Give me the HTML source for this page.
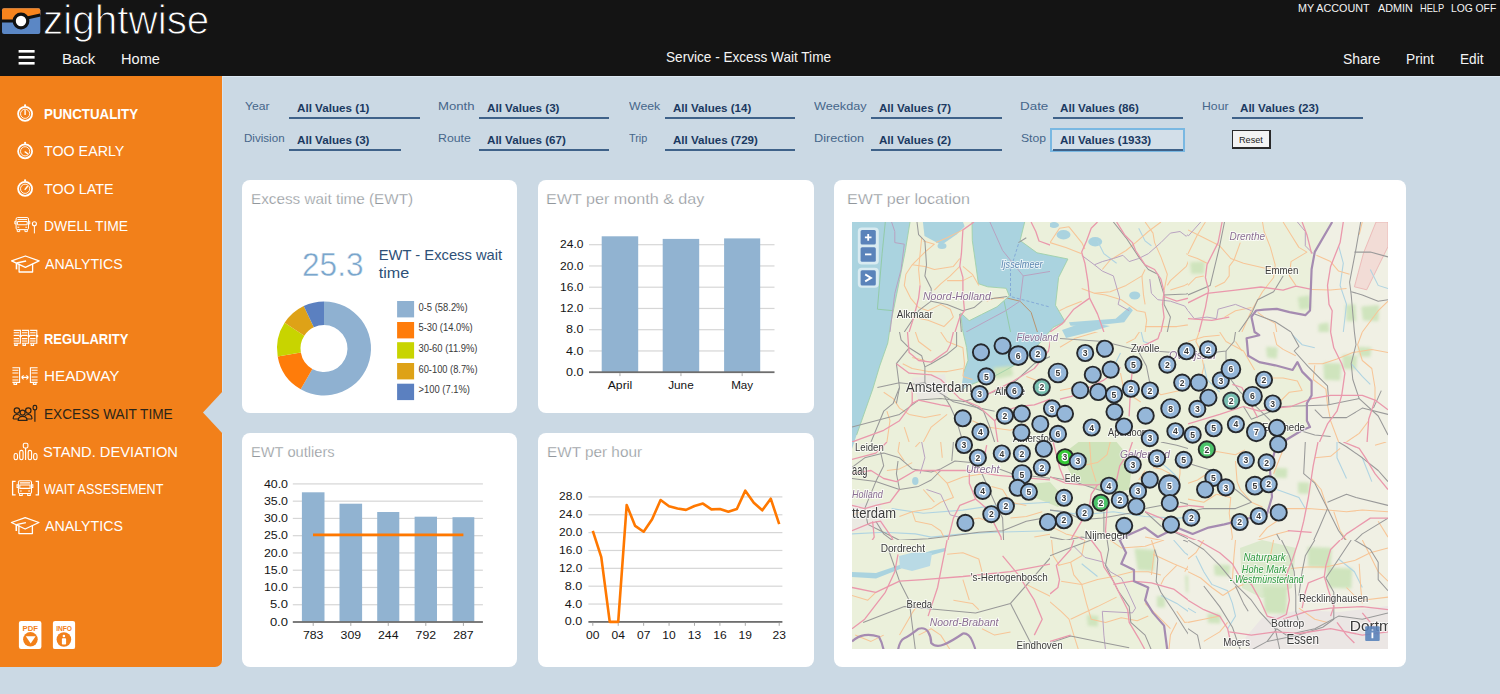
<!DOCTYPE html>
<html><head><meta charset="utf-8">
<style>
*{margin:0;padding:0;box-sizing:border-box}
html,body{width:1500px;height:694px;overflow:hidden;background:#cbd9e4;font-family:"Liberation Sans",sans-serif}
.a{position:absolute;white-space:nowrap;line-height:1}
#hdr{position:absolute;left:0;top:0;width:1500px;height:76px;background:#141414}
.hw{color:#f4f4f4}
#side{position:absolute;left:0;top:76px;width:222px;height:591px;background:#f2801a;border-bottom-right-radius:7px}
.si{color:#fff}
.fl{color:#46668a}
.fv{color:#1b3961;font-weight:bold}
.ul{position:absolute;height:2px;background:#3f6289}
.card{position:absolute;background:#fff;border-radius:8px}
.ct{color:#92979c;-webkit-text-stroke:0.25px #fff}
</style></head><body>
<div id="hdr"></div>
<div class="a" style="left:222px;top:76px;width:1278px;height:1.2px;background:#dce8f2"></div>
<div class="a" style="left:222px;top:76px;width:1.3px;height:585px;background:#d6e4ef"></div>
<svg class="a" style="left:0;top:0" width="44" height="40" viewBox="0 0 44 40">
<rect x="2" y="8.3" width="38.3" height="25.7" rx="2" fill="#5b87c5"/>
<path d="M4 8.3 H38.3 Q40.3 8.3 40.3 10.3 V15 L28.8 17 L21 21 L2 21 V10.3 Q2 8.3 4 8.3Z" fill="#f7841e"/>
<path d="M2 21 H14 M27 18 L40.3 15" stroke="#111" stroke-width="3.2" fill="none"/>
<circle cx="21" cy="21" r="6.8" fill="#fff" stroke="#111" stroke-width="3.2"/>
</svg>
<div class="a hw" id="logo" style="left:43.38px;top:0.00px;font-size:40px;color:#fff;-webkit-text-stroke:1px #141414;transform:scaleX(1.0112);transform-origin:0 0;">zightwise</div>
<svg class="a" style="left:18px;top:50px" width="17" height="15"><rect x="0.6" y="0" width="16" height="2.6" fill="#fff"/><rect x="0.6" y="6" width="16" height="2.6" fill="#fff"/><rect x="0.6" y="12" width="16" height="2.6" fill="#fff"/></svg>
<div class="a hw" style="left:61.76px;top:51.67px;font-size:14.5px;transform:scaleX(1.0323);transform-origin:0 0;">Back</div>
<div class="a hw" style="left:120.79px;top:51.67px;font-size:14.5px;transform:scaleX(1.0054);transform-origin:0 0;">Home</div>
<div class="a hw" style="left:666.34px;top:49.67px;font-size:14.5px;transform:scaleX(0.9381);transform-origin:0 0;">Service - Excess Wait Time</div>
<div class="a hw" style="left:1343.30px;top:51.50px;font-size:14px;transform:scaleX(0.9972);transform-origin:0 0;">Share</div>
<div class="a hw" style="left:1405.92px;top:51.50px;font-size:14px;transform:scaleX(0.9783);transform-origin:0 0;">Print</div>
<div class="a hw" style="left:1459.63px;top:51.50px;font-size:14px;transform:scaleX(0.9738);transform-origin:0 0;">Edit</div>
<div class="a hw" style="left:1298.12px;top:2.65px;font-size:11px;transform:scaleX(0.9792);transform-origin:0 0;">MY ACCOUNT</div>
<div class="a hw" style="left:1378.00px;top:2.65px;font-size:11px;transform:scaleX(0.9827);transform-origin:0 0;">ADMIN</div>
<div class="a hw" style="left:1419.74px;top:2.65px;font-size:11px;transform:scaleX(0.8425);transform-origin:0 0;">HELP</div>
<div class="a hw" style="left:1451.16px;top:2.65px;font-size:11px;transform:scaleX(0.9362);transform-origin:0 0;">LOG OFF</div>
<div id="side"></div>
<svg class="a" style="left:200px;top:388px" width="24" height="48"><path d="M23 3 L3 24.5 L23 46Z" fill="#cbd9e4"/></svg>
<div class="a si" style="left:43.81px;top:106.05px;font-size:15px;font-weight:bold;transform:scaleX(0.8890);transform-origin:0 0;">PUNCTUALITY</div>
<div class="a si" style="left:44.41px;top:143.45px;font-size:15px;transform:scaleX(0.9511);transform-origin:0 0;">TOO EARLY</div>
<div class="a si" style="left:44.41px;top:180.85px;font-size:15px;transform:scaleX(0.9555);transform-origin:0 0;">TOO LATE</div>
<div class="a si" style="left:43.89px;top:217.55px;font-size:15px;transform:scaleX(0.9258);transform-origin:0 0;">DWELL TIME</div>
<div class="a si" style="left:45.00px;top:256.05px;font-size:15px;transform:scaleX(0.9448);transform-origin:0 0;">ANALYTICS</div>
<div class="a si" style="left:44.34px;top:330.85px;font-size:15px;font-weight:bold;transform:scaleX(0.8649);transform-origin:0 0;">REGULARITY</div>
<div class="a si" style="left:43.78px;top:368.05px;font-size:15px;transform:scaleX(1.0165);transform-origin:0 0;">HEADWAY</div>
<div class="a si" style="left:43.91px;top:405.85px;font-size:15px;color:#2b2418;transform:scaleX(0.9097);transform-origin:0 0;">EXCESS WAIT TIME</div>
<div class="a si" style="left:42.91px;top:443.55px;font-size:15px;transform:scaleX(0.9794);transform-origin:0 0;">STAND. DEVIATION</div>
<div class="a si" style="left:43.92px;top:480.55px;font-size:15px;transform:scaleX(0.8374);transform-origin:0 0;">WAIT ASSESEMENT</div>
<div class="a si" style="left:44.70px;top:518.05px;font-size:15px;transform:scaleX(0.9485);transform-origin:0 0;">ANALYTICS</div>
<svg class="a" style="left:0;top:0" width="222" height="694">
<circle cx="25.1" cy="113.8" r="7.0" fill="none" stroke="#fff" stroke-width="1.8"/>
<circle cx="25.1" cy="113.8" r="4.6" fill="none" stroke="#fff" stroke-width="0.9"/>
<circle cx="25.1" cy="105.39999999999999" r="1.1" fill="#fff"/>
<path d="M25.1 114.39999999999999 L25.10 110.60" stroke="#fff" stroke-width="1.4" stroke-linecap="round"/>
<circle cx="25.1" cy="151.3" r="7.0" fill="none" stroke="#fff" stroke-width="1.8"/>
<circle cx="25.1" cy="151.3" r="4.6" fill="none" stroke="#fff" stroke-width="0.9"/>
<circle cx="25.1" cy="142.9" r="1.1" fill="#fff"/>
<path d="M25.1 151.9 L27.36 153.56" stroke="#fff" stroke-width="1.4" stroke-linecap="round"/>
<circle cx="25.1" cy="188.8" r="7.0" fill="none" stroke="#fff" stroke-width="1.8"/>
<circle cx="25.1" cy="188.8" r="4.6" fill="none" stroke="#fff" stroke-width="0.9"/>
<circle cx="25.1" cy="180.4" r="1.1" fill="#fff"/>
<path d="M25.1 189.4 L27.36 186.54" stroke="#fff" stroke-width="1.4" stroke-linecap="round"/>
<g transform="translate(14.3,217.2) scale(0.9)" fill="none" stroke="#fff" stroke-width="1.1">
<rect x="2" y="0.4" width="13.8" height="13.4" rx="1.6"/>
<path d="M3.5 2.6 H14.3 M3.5 4.8 H14.3 V8.4 H3.5Z M3.5 11.2 H5.5 M12.3 11.2 H14.3"/>
<path d="M2 4.5 H0.6 V7.5 H2 M15.8 4.5 H17.2 V7.5 H15.8"/>
<path d="M3.3 13.8 V16 H6 V13.8 M11.8 13.8 V16 H14.5 V13.8"/>
</g>
<circle cx="34.4" cy="223.7" r="2" fill="none" stroke="#fff" stroke-width="1.1"/><path d="M34.4 225.7 V233.4" stroke="#fff" stroke-width="1"/>
<g transform="translate(11.6,256)" fill="none" stroke="#fff" stroke-width="1.3" stroke-linejoin="round">
<path d="M0 4.9 L13.8 0 L27.5 4.9 L13.8 11.4Z"/>
<path d="M7.5 7.7 V16 H21 V7.7"/>
<path d="M4.9 7 V13.4" stroke-width="1.6"/>
<path d="M4.9 7 L14.5 5"/>
</g>
<g transform="translate(13.2,329.8)" fill="none" stroke="#fff" stroke-width="1.1">
<path d="M0.5 0.6 H7.2 V13.4 H0.5 M0.5 3 H6 M0.5 5.6 H6 M0.5 8.8 H6 M0.5 11.2 H6"/>
<path d="M1.6 13.4 V15.6 H4 V13.4"/><circle cx="7.4" cy="6.2" r="0.8" fill="#fff"/>
</g>
<g transform="translate(21.4,329.8)" fill="none" stroke="#fff" stroke-width="1.1">
<path d="M0.5 0.6 H7.2 V13.4 H0.5 M0.5 3 H6 M0.5 5.6 H6 M0.5 8.8 H6 M0.5 11.2 H6"/>
<path d="M1.6 13.4 V15.6 H4 V13.4"/><circle cx="7.4" cy="6.2" r="0.8" fill="#fff"/>
</g>
<g transform="translate(29.6,329.8)" fill="none" stroke="#fff" stroke-width="1.1">
<path d="M0.5 0.6 H7.2 V13.4 H0.5 M0.5 3 H6 M0.5 5.6 H6 M0.5 8.8 H6 M0.5 11.2 H6"/>
<path d="M1.6 13.4 V15.6 H4 V13.4"/><circle cx="7.4" cy="6.2" r="0.8" fill="#fff"/>
</g>
<g fill="none" stroke="#fff" stroke-width="1.1">
<path d="M12.4 367.8 H19.6 V382.4 H12.4 M12.4 370.2 H18.4 M12.4 373 H18.4 M12.4 377 H18.4 M12.4 380 H18.4 M14 382.4 V384.4 H16.6 V382.4"/>
<path d="M37.6 367.8 H30.4 V382.4 H37.6 M37.6 370.2 H31.6 M37.6 373 H31.6 M37.6 377 H31.6 M37.6 380 H31.6 M36 382.4 V384.4 H33.4 V382.4"/>
<path d="M21.5 377.4 L23.6 375.4 M21.5 377.4 L23.6 379.4 M28.5 377.4 L26.4 375.4 M28.5 377.4 L26.4 379.4 M21.7 377.4 H28.3"/>
</g>
<g fill="none" stroke="#2a2219" stroke-width="1.2">
<circle cx="16.9" cy="410.6" r="2.7"/><circle cx="28.3" cy="410.6" r="2.7"/><circle cx="22.6" cy="412.6" r="2.5"/>
<path d="M13.2 419 Q13.2 414.5 17 414.5 Q19.5 414.5 20.3 416 M32 419 Q32 414.5 28.2 414.5 Q25.8 414.5 25 416 M13.2 419 H19 M26.2 419 H32"/>
<path d="M18.2 420.4 Q18.2 416.4 22.6 416.4 Q27 416.4 27 420.4 Z"/>
<rect x="33.1" y="405.4" width="3.6" height="4.4" rx="1.6"/><path d="M34.9 409.8 V421.8"/>
</g>
<g fill="none" stroke="#fff" stroke-width="1.1">
<rect x="14.1" y="453.5" width="3.4" height="6.2" rx="1.7"/><rect x="19.7" y="450.4" width="3.4" height="9.3" rx="1.7"/>
<rect x="28.2" y="450.4" width="3.4" height="9.3" rx="1.7"/><rect x="33.6" y="453.5" width="3.4" height="6.2" rx="1.7"/>
<rect x="23.3" y="443.2" width="4.6" height="4.8" rx="1.4"/><path d="M25.6 448 V460"/>
</g>
<g transform="translate(16.5,480.4) scale(0.95)" fill="none" stroke="#fff" stroke-width="1.1">
<rect x="2" y="0.4" width="13.8" height="13.4" rx="1.6"/>
<path d="M3.5 2.6 H14.3 M3.5 4.8 H14.3 V8.4 H3.5Z M3.5 11.2 H5.5 M12.3 11.2 H14.3"/>
<path d="M2 4.5 H0.6 V7.5 H2 M15.8 4.5 H17.2 V7.5 H15.8"/>
<path d="M3.3 13.8 V16 H6 V13.8 M11.8 13.8 V16 H14.5 V13.8"/>
</g>
<g fill="none" stroke="#fff" stroke-width="1.3"><path d="M15.6 481.4 H12.6 V494.8 H15.6 M35.6 481.4 H38.4 V494.8 H35.6"/></g>
<g transform="translate(11.4,517.6)" fill="none" stroke="#fff" stroke-width="1.3" stroke-linejoin="round">
<path d="M0 4.9 L13.8 0 L27.5 4.9 L13.8 11.4Z"/>
<path d="M7.5 7.7 V16 H21 V7.7"/>
<path d="M4.9 7 V13.4" stroke-width="1.6"/>
<path d="M4.9 7 L14.5 5"/>
</g>
</svg>
<svg class="a" style="left:0;top:600px" width="100" height="60">
<rect x="18.9" y="20.9" width="22.5" height="28" rx="2.2" fill="#fff"/>
<text x="30.2" y="30.6" font-family="Liberation Sans" font-weight="bold" font-size="6.6" fill="#f2801a" text-anchor="middle" textLength="15.4" lengthAdjust="spacingAndGlyphs">PDF</text>
<circle cx="30.4" cy="39.3" r="7.3" fill="#f2801a"/><path d="M25.8 36.3 H35.6 L30.7 43.4Z" fill="#fff"/>
<rect x="52.9" y="20.9" width="22.2" height="28.2" rx="2.2" fill="#fff"/>
<text x="64.1" y="30.6" font-family="Liberation Sans" font-weight="bold" font-size="6.6" fill="#f2801a" text-anchor="middle" textLength="15.8" lengthAdjust="spacingAndGlyphs">INFO</text>
<circle cx="63.9" cy="39.5" r="7.3" fill="#f2801a"/><circle cx="63.9" cy="36" r="1.3" fill="#fff"/><rect x="61.9" y="38.2" width="4.2" height="6.4" rx="0.8" fill="#fff"/>
</svg>
<div class="a fl" style="left:244.68px;top:101.42px;font-size:11.5px;transform:scaleX(1.0573);transform-origin:0 0;">Year</div>
<div class="a fv" style="left:296.70px;top:103.02px;font-size:11.5px;font-weight:bold;transform:scaleX(1.0127);transform-origin:0 0;">All Values (1)</div>
<div class="ul" style="left:289px;top:117px;width:131px"></div>
<div class="a fl" style="left:244.09px;top:133.42px;font-size:11.5px;transform:scaleX(1.0078);transform-origin:0 0;">Division</div>
<div class="a fv" style="left:296.70px;top:135.03px;font-size:11.5px;font-weight:bold;transform:scaleX(1.0127);transform-origin:0 0;">All Values (3)</div>
<div class="ul" style="left:289px;top:149px;width:112px"></div>
<div class="a fl" style="left:438.27px;top:101.42px;font-size:11.5px;transform:scaleX(1.1414);transform-origin:0 0;">Month</div>
<div class="a fv" style="left:486.70px;top:103.02px;font-size:11.5px;font-weight:bold;transform:scaleX(1.0127);transform-origin:0 0;">All Values (3)</div>
<div class="ul" style="left:479px;top:117px;width:130.29999999999995px"></div>
<div class="a fl" style="left:438.34px;top:133.42px;font-size:11.5px;transform:scaleX(1.0717);transform-origin:0 0;">Route</div>
<div class="a fv" style="left:486.70px;top:135.03px;font-size:11.5px;font-weight:bold;transform:scaleX(1.0104);transform-origin:0 0;">All Values (67)</div>
<div class="ul" style="left:479px;top:149px;width:130.29999999999995px"></div>
<div class="a fl" style="left:628.89px;top:101.42px;font-size:11.5px;transform:scaleX(1.0690);transform-origin:0 0;">Week</div>
<div class="a fv" style="left:672.70px;top:103.02px;font-size:11.5px;font-weight:bold;transform:scaleX(1.0039);transform-origin:0 0;">All Values (14)</div>
<div class="ul" style="left:664.7px;top:117px;width:130.29999999999995px"></div>
<div class="a fl" style="left:628.81px;top:133.42px;font-size:11.5px;transform:scaleX(0.9465);transform-origin:0 0;">Trip</div>
<div class="a fv" style="left:672.70px;top:135.03px;font-size:11.5px;font-weight:bold;transform:scaleX(1.0060);transform-origin:0 0;">All Values (729)</div>
<div class="ul" style="left:664.7px;top:149px;width:130.29999999999995px"></div>
<div class="a fl" style="left:814.49px;top:101.42px;font-size:11.5px;transform:scaleX(1.1008);transform-origin:0 0;">Weekday</div>
<div class="a fv" style="left:879.40px;top:103.02px;font-size:11.5px;font-weight:bold;transform:scaleX(1.0071);transform-origin:0 0;">All Values (7)</div>
<div class="ul" style="left:871.3px;top:117px;width:130.4000000000001px"></div>
<div class="a fl" style="left:813.61px;top:133.42px;font-size:11.5px;transform:scaleX(1.1050);transform-origin:0 0;">Direction</div>
<div class="a fv" style="left:879.40px;top:135.03px;font-size:11.5px;font-weight:bold;transform:scaleX(1.0071);transform-origin:0 0;">All Values (2)</div>
<div class="ul" style="left:871.3px;top:149px;width:130.4000000000001px"></div>
<div class="a fl" style="left:1020.25px;top:101.42px;font-size:11.5px;transform:scaleX(1.1659);transform-origin:0 0;">Date</div>
<div class="a fv" style="left:1060.40px;top:103.02px;font-size:11.5px;font-weight:bold;transform:scaleX(1.0117);transform-origin:0 0;">All Values (86)</div>
<div class="ul" style="left:1052.7px;top:117px;width:130.29999999999995px"></div>
<div class="a" style="left:1050px;top:128px;width:135px;height:24px;border:2px solid #79b8e2;background:#d3dfe9"></div>
<div class="a fl" style="left:1020.77px;top:133.42px;font-size:11.5px;transform:scaleX(1.0573);transform-origin:0 0;">Stop</div>
<div class="a fv" style="left:1060.40px;top:135.03px;font-size:11.5px;font-weight:bold;transform:scaleX(1.0044);transform-origin:0 0;">All Values (1933)</div>
<div class="ul" style="left:1052.7px;top:149px;width:130.29999999999995px"></div>
<div class="a fl" style="left:1201.74px;top:101.42px;font-size:11.5px;transform:scaleX(1.0630);transform-origin:0 0;">Hour</div>
<div class="a fv" style="left:1240.10px;top:103.02px;font-size:11.5px;font-weight:bold;transform:scaleX(1.0104);transform-origin:0 0;">All Values (23)</div>
<div class="ul" style="left:1232px;top:117px;width:131px"></div>
<div class="a" style="left:1232px;top:130px;width:38.5px;height:18.5px;border:1.5px solid #2a2a2a;background:#f3f3f3;border-right-width:2.6px;border-bottom-width:2.6px"></div>
<div class="a " style="left:1238.83px;top:135.23px;font-size:9.5px;color:#222;transform:scaleX(0.9625);transform-origin:0 0;">Reset</div>
<div class="card" style="left:242px;top:180px;width:275px;height:233px"></div>
<div class="card" style="left:538px;top:180px;width:276px;height:233px"></div>
<div class="card" style="left:242px;top:433px;width:275px;height:234px"></div>
<div class="card" style="left:538px;top:433px;width:276px;height:234px"></div>
<div class="card" style="left:834px;top:180px;width:571.5px;height:487px"></div>
<div class="a ct" style="left:250.58px;top:190.75px;font-size:15px;transform:scaleX(1.0185);transform-origin:0 0;">Excess wait time (EWT)</div>
<div class="a ct" style="left:546.21px;top:190.75px;font-size:15px;transform:scaleX(1.0753);transform-origin:0 0;">EWT per month &amp; day</div>
<div class="a ct" style="left:250.83px;top:444.25px;font-size:15px;transform:scaleX(0.9774);transform-origin:0 0;">EWT outliers</div>
<div class="a ct" style="left:546.78px;top:444.25px;font-size:15px;transform:scaleX(1.0207);transform-origin:0 0;">EWT per hour</div>
<div class="a ct" style="left:847.11px;top:191.25px;font-size:15px;transform:scaleX(1.0710);transform-origin:0 0;">EWT per location</div>
<svg class="a" style="left:0;top:0" width="834" height="694">
<path d="M324.00 301.50 A47 47 0 1 1 300.69 389.31 L312.35 368.91 A23.5 23.5 0 1 0 324.00 325.00Z" fill="#8fb1d1"/>
<path d="M300.69 389.31 A47 47 0 0 1 277.69 356.52 L300.84 352.51 A23.5 23.5 0 0 0 312.35 368.91Z" fill="#ff7c0a"/>
<path d="M277.69 356.52 A47 47 0 0 1 284.61 322.86 L304.31 335.68 A23.5 23.5 0 0 0 300.84 352.51Z" fill="#c8d400"/>
<path d="M284.61 322.86 A47 47 0 0 1 303.70 306.11 L313.85 327.30 A23.5 23.5 0 0 0 304.31 335.68Z" fill="#dea217"/>
<path d="M303.70 306.11 A47 47 0 0 1 324.00 301.50 L324.00 325.00 A23.5 23.5 0 0 0 313.85 327.30Z" fill="#5b80c0"/>
<rect x="397.1" y="301" width="17" height="16.4" fill="#8fb1d1"/>
<text x="418.50" y="310.80" font-family="Liberation Sans" font-size="10" fill="#3a3a3a" text-anchor="start" textLength="49.10000000000002" lengthAdjust="spacingAndGlyphs" >0-5 (58.2%)</text>
<rect x="397.1" y="322" width="17" height="16.4" fill="#ff7c0a"/>
<text x="418.50" y="331.40" font-family="Liberation Sans" font-size="10" fill="#3a3a3a" text-anchor="start" textLength="54.19999999999999" lengthAdjust="spacingAndGlyphs" >5-30 (14.0%)</text>
<rect x="397.1" y="342.2" width="17" height="16.4" fill="#c8d400"/>
<text x="418.50" y="352.00" font-family="Liberation Sans" font-size="10" fill="#3a3a3a" text-anchor="start" textLength="59.0" lengthAdjust="spacingAndGlyphs" >30-60 (11.9%)</text>
<rect x="397.1" y="363" width="17" height="16.4" fill="#dea217"/>
<text x="418.50" y="372.60" font-family="Liberation Sans" font-size="10" fill="#3a3a3a" text-anchor="start" textLength="59.0" lengthAdjust="spacingAndGlyphs" >60-100 (8.7%)</text>
<rect x="397.1" y="383.7" width="17" height="16.4" fill="#5b80c0"/>
<text x="418.50" y="392.90" font-family="Liberation Sans" font-size="10" fill="#3a3a3a" text-anchor="start" textLength="51.5" lengthAdjust="spacingAndGlyphs" >&gt;100 (7.1%)</text>
<text x="302.00" y="276.00" font-family="Liberation Sans" font-size="34" fill="#7aa6cc" text-anchor="start" textLength="61.5" lengthAdjust="spacingAndGlyphs" stroke="#fff" stroke-width="0.5">25.3</text>
<text x="378.70" y="259.60" font-family="Liberation Sans" font-size="15" fill="#2e5077" text-anchor="start" textLength="123.5" lengthAdjust="spacingAndGlyphs" >EWT - Excess wait</text>
<text x="378.70" y="278.30" font-family="Liberation Sans" font-size="15" fill="#2e5077" text-anchor="start" textLength="30.5" lengthAdjust="spacingAndGlyphs" >time</text>
<rect x="589" y="350.35" width="185.5" height="1.2" fill="#d6d6d6"/>
<rect x="589" y="329.10" width="185.5" height="1.2" fill="#d6d6d6"/>
<rect x="589" y="307.85" width="185.5" height="1.2" fill="#d6d6d6"/>
<rect x="589" y="286.60" width="185.5" height="1.2" fill="#d6d6d6"/>
<rect x="589" y="265.35" width="185.5" height="1.2" fill="#d6d6d6"/>
<rect x="589" y="244.10" width="185.5" height="1.2" fill="#d6d6d6"/>
<text x="583.50" y="375.90" font-family="Liberation Sans" font-size="10.2" fill="#141414" text-anchor="end" textLength="17.5" lengthAdjust="spacingAndGlyphs" >0.0</text>
<text x="583.50" y="354.65" font-family="Liberation Sans" font-size="10.2" fill="#141414" text-anchor="end" textLength="17.5" lengthAdjust="spacingAndGlyphs" >4.0</text>
<text x="583.50" y="333.40" font-family="Liberation Sans" font-size="10.2" fill="#141414" text-anchor="end" textLength="17.5" lengthAdjust="spacingAndGlyphs" >8.0</text>
<text x="583.50" y="312.15" font-family="Liberation Sans" font-size="10.2" fill="#141414" text-anchor="end" textLength="23.4" lengthAdjust="spacingAndGlyphs" >12.0</text>
<text x="583.50" y="290.90" font-family="Liberation Sans" font-size="10.2" fill="#141414" text-anchor="end" textLength="23.4" lengthAdjust="spacingAndGlyphs" >16.0</text>
<text x="583.50" y="269.65" font-family="Liberation Sans" font-size="10.2" fill="#141414" text-anchor="end" textLength="23.4" lengthAdjust="spacingAndGlyphs" >20.0</text>
<text x="583.50" y="248.40" font-family="Liberation Sans" font-size="10.2" fill="#141414" text-anchor="end" textLength="23.4" lengthAdjust="spacingAndGlyphs" >24.0</text>
<rect x="601.7" y="236.3" width="36.5" height="135.89999999999998" fill="#91b3d1"/>
<rect x="662.7" y="238.9" width="36.5" height="133.29999999999998" fill="#91b3d1"/>
<rect x="724.1" y="238.4" width="36.10000000000002" height="133.79999999999998" fill="#91b3d1"/>
<rect x="589" y="371.3" width="185.5" height="1.8" fill="#6e6e6e"/>
<rect x="619.45" y="373.09999999999997" width="1" height="3" fill="#aaa"/>
<text x="619.95" y="388.60" font-family="Liberation Sans" font-size="10.2" fill="#141414" text-anchor="middle" textLength="24.5" lengthAdjust="spacingAndGlyphs" >April</text>
<rect x="680.45" y="373.09999999999997" width="1" height="3" fill="#aaa"/>
<text x="680.95" y="388.60" font-family="Liberation Sans" font-size="10.2" fill="#141414" text-anchor="middle" textLength="25.5" lengthAdjust="spacingAndGlyphs" >June</text>
<rect x="741.6500000000001" y="373.09999999999997" width="1" height="3" fill="#aaa"/>
<text x="742.15" y="388.60" font-family="Liberation Sans" font-size="10.2" fill="#141414" text-anchor="middle" textLength="22" lengthAdjust="spacingAndGlyphs" >May</text>
<rect x="292.8" y="604.14" width="190.09999999999997" height="1.2" fill="#d6d6d6"/>
<rect x="292.8" y="586.88" width="190.09999999999997" height="1.2" fill="#d6d6d6"/>
<rect x="292.8" y="569.61" width="190.09999999999997" height="1.2" fill="#d6d6d6"/>
<rect x="292.8" y="552.35" width="190.09999999999997" height="1.2" fill="#d6d6d6"/>
<rect x="292.8" y="535.09" width="190.09999999999997" height="1.2" fill="#d6d6d6"/>
<rect x="292.8" y="517.82" width="190.09999999999997" height="1.2" fill="#d6d6d6"/>
<rect x="292.8" y="500.56" width="190.09999999999997" height="1.2" fill="#d6d6d6"/>
<rect x="292.8" y="483.30" width="190.09999999999997" height="1.2" fill="#d6d6d6"/>
<text x="288.00" y="625.70" font-family="Liberation Sans" font-size="10.2" fill="#141414" text-anchor="end" textLength="18.1" lengthAdjust="spacingAndGlyphs" >0.0</text>
<text x="288.00" y="608.44" font-family="Liberation Sans" font-size="10.2" fill="#141414" text-anchor="end" textLength="18.1" lengthAdjust="spacingAndGlyphs" >5.0</text>
<text x="288.00" y="591.18" font-family="Liberation Sans" font-size="10.2" fill="#141414" text-anchor="end" textLength="24.1" lengthAdjust="spacingAndGlyphs" >10.0</text>
<text x="288.00" y="573.91" font-family="Liberation Sans" font-size="10.2" fill="#141414" text-anchor="end" textLength="24.1" lengthAdjust="spacingAndGlyphs" >15.0</text>
<text x="288.00" y="556.65" font-family="Liberation Sans" font-size="10.2" fill="#141414" text-anchor="end" textLength="24.1" lengthAdjust="spacingAndGlyphs" >20.0</text>
<text x="288.00" y="539.39" font-family="Liberation Sans" font-size="10.2" fill="#141414" text-anchor="end" textLength="24.1" lengthAdjust="spacingAndGlyphs" >25.0</text>
<text x="288.00" y="522.12" font-family="Liberation Sans" font-size="10.2" fill="#141414" text-anchor="end" textLength="24.1" lengthAdjust="spacingAndGlyphs" >30.0</text>
<text x="288.00" y="504.86" font-family="Liberation Sans" font-size="10.2" fill="#141414" text-anchor="end" textLength="24.1" lengthAdjust="spacingAndGlyphs" >35.0</text>
<text x="288.00" y="487.60" font-family="Liberation Sans" font-size="10.2" fill="#141414" text-anchor="end" textLength="24.1" lengthAdjust="spacingAndGlyphs" >40.0</text>
<rect x="301.9" y="492.3" width="22.600000000000023" height="129.7" fill="#91b3d1"/>
<rect x="339.5" y="503.7" width="22.600000000000023" height="118.30000000000001" fill="#91b3d1"/>
<rect x="377.2" y="512" width="22.100000000000023" height="110" fill="#91b3d1"/>
<rect x="414.6" y="516.7" width="22.399999999999977" height="105.29999999999995" fill="#91b3d1"/>
<rect x="452.5" y="517.2" width="21.80000000000001" height="104.79999999999995" fill="#91b3d1"/>
<rect x="292.8" y="621.1" width="190.09999999999997" height="1.8" fill="#6e6e6e"/>
<path d="M313 534.9 H463.4" stroke="#ff7800" stroke-width="2.6"/>
<rect x="312.7" y="622.9" width="1" height="3" fill="#aaa"/>
<text x="313.20" y="638.70" font-family="Liberation Sans" font-size="10.2" fill="#141414" text-anchor="middle" textLength="20.5" lengthAdjust="spacingAndGlyphs" >783</text>
<rect x="350.3" y="622.9" width="1" height="3" fill="#aaa"/>
<text x="350.80" y="638.70" font-family="Liberation Sans" font-size="10.2" fill="#141414" text-anchor="middle" textLength="20.5" lengthAdjust="spacingAndGlyphs" >309</text>
<rect x="387.75" y="622.9" width="1" height="3" fill="#aaa"/>
<text x="388.25" y="638.70" font-family="Liberation Sans" font-size="10.2" fill="#141414" text-anchor="middle" textLength="20.5" lengthAdjust="spacingAndGlyphs" >244</text>
<rect x="425.3" y="622.9" width="1" height="3" fill="#aaa"/>
<text x="425.80" y="638.70" font-family="Liberation Sans" font-size="10.2" fill="#141414" text-anchor="middle" textLength="20.5" lengthAdjust="spacingAndGlyphs" >792</text>
<rect x="462.9" y="622.9" width="1" height="3" fill="#aaa"/>
<text x="463.40" y="638.70" font-family="Liberation Sans" font-size="10.2" fill="#141414" text-anchor="middle" textLength="20.5" lengthAdjust="spacingAndGlyphs" >287</text>
<rect x="588.4" y="603.44" width="194.0" height="1.2" fill="#d6d6d6"/>
<rect x="588.4" y="585.59" width="194.0" height="1.2" fill="#d6d6d6"/>
<rect x="588.4" y="567.73" width="194.0" height="1.2" fill="#d6d6d6"/>
<rect x="588.4" y="549.88" width="194.0" height="1.2" fill="#d6d6d6"/>
<rect x="588.4" y="532.02" width="194.0" height="1.2" fill="#d6d6d6"/>
<rect x="588.4" y="514.16" width="194.0" height="1.2" fill="#d6d6d6"/>
<rect x="588.4" y="496.31" width="194.0" height="1.2" fill="#d6d6d6"/>
<text x="582.30" y="625.40" font-family="Liberation Sans" font-size="10.2" fill="#141414" text-anchor="end" textLength="17.5" lengthAdjust="spacingAndGlyphs" >0.0</text>
<text x="582.30" y="607.54" font-family="Liberation Sans" font-size="10.2" fill="#141414" text-anchor="end" textLength="17.5" lengthAdjust="spacingAndGlyphs" >4.0</text>
<text x="582.30" y="589.69" font-family="Liberation Sans" font-size="10.2" fill="#141414" text-anchor="end" textLength="17.5" lengthAdjust="spacingAndGlyphs" >8.0</text>
<text x="582.30" y="571.83" font-family="Liberation Sans" font-size="10.2" fill="#141414" text-anchor="end" textLength="23.2" lengthAdjust="spacingAndGlyphs" >12.0</text>
<text x="582.30" y="553.98" font-family="Liberation Sans" font-size="10.2" fill="#141414" text-anchor="end" textLength="23.2" lengthAdjust="spacingAndGlyphs" >16.0</text>
<text x="582.30" y="536.12" font-family="Liberation Sans" font-size="10.2" fill="#141414" text-anchor="end" textLength="23.2" lengthAdjust="spacingAndGlyphs" >20.0</text>
<text x="582.30" y="518.26" font-family="Liberation Sans" font-size="10.2" fill="#141414" text-anchor="end" textLength="23.2" lengthAdjust="spacingAndGlyphs" >24.0</text>
<text x="582.30" y="500.41" font-family="Liberation Sans" font-size="10.2" fill="#141414" text-anchor="end" textLength="23.2" lengthAdjust="spacingAndGlyphs" >28.0</text>
<rect x="588.4" y="621.0" width="194.0" height="1.8" fill="#6e6e6e"/>
<polyline points="592.80,530.83 601.27,557.17 609.75,621.90 618.22,621.90 626.69,504.94 635.16,525.92 643.64,531.73 652.11,519.23 660.58,500.03 669.06,506.28 677.53,508.51 686.00,509.85 694.48,506.06 702.95,503.60 711.42,509.41 719.89,508.96 728.37,511.64 736.84,508.96 745.31,490.66 753.79,502.71 762.26,510.30 770.73,498.69 779.21,524.14" fill="none" stroke="#ff7800" stroke-width="2.6" stroke-linejoin="round"/>
<rect x="592.30" y="622.8" width="1" height="3" fill="#aaa"/>
<text x="592.80" y="638.60" font-family="Liberation Sans" font-size="10.2" fill="#141414" text-anchor="middle" textLength="13.4" lengthAdjust="spacingAndGlyphs" >00</text>
<rect x="617.72" y="622.8" width="1" height="3" fill="#aaa"/>
<text x="618.22" y="638.60" font-family="Liberation Sans" font-size="10.2" fill="#141414" text-anchor="middle" textLength="13.4" lengthAdjust="spacingAndGlyphs" >04</text>
<rect x="643.14" y="622.8" width="1" height="3" fill="#aaa"/>
<text x="643.64" y="638.60" font-family="Liberation Sans" font-size="10.2" fill="#141414" text-anchor="middle" textLength="13.4" lengthAdjust="spacingAndGlyphs" >07</text>
<rect x="668.56" y="622.8" width="1" height="3" fill="#aaa"/>
<text x="669.06" y="638.60" font-family="Liberation Sans" font-size="10.2" fill="#141414" text-anchor="middle" textLength="13.4" lengthAdjust="spacingAndGlyphs" >10</text>
<rect x="693.98" y="622.8" width="1" height="3" fill="#aaa"/>
<text x="694.48" y="638.60" font-family="Liberation Sans" font-size="10.2" fill="#141414" text-anchor="middle" textLength="13.4" lengthAdjust="spacingAndGlyphs" >13</text>
<rect x="719.39" y="622.8" width="1" height="3" fill="#aaa"/>
<text x="719.89" y="638.60" font-family="Liberation Sans" font-size="10.2" fill="#141414" text-anchor="middle" textLength="13.4" lengthAdjust="spacingAndGlyphs" >16</text>
<rect x="744.81" y="622.8" width="1" height="3" fill="#aaa"/>
<text x="745.31" y="638.60" font-family="Liberation Sans" font-size="10.2" fill="#141414" text-anchor="middle" textLength="13.4" lengthAdjust="spacingAndGlyphs" >19</text>
<rect x="778.71" y="622.8" width="1" height="3" fill="#aaa"/>
<text x="779.21" y="638.60" font-family="Liberation Sans" font-size="10.2" fill="#141414" text-anchor="middle" textLength="13.4" lengthAdjust="spacingAndGlyphs" >23</text>
</svg>
<svg class="a" style="left:852px;top:222px" width="536" height="427" viewBox="852 222 536 427">
<rect x="852" y="222" width="536" height="427" fill="#ebf0db"/>
<polygon points="1332.2,222.0 1314.8,251.9 1311.6,269.3 1310.0,310.5 1305.3,315.2 1289.5,312.1 1276.8,308.9 1264.1,309.7 1256.2,310.5 1251.4,316.8 1254.6,332.0 1259.3,335.2 1246.6,338.3 1248.2,355.8 1259.3,362.1 1275.2,365.3 1292.6,370.0 1297.4,362.1 1302.1,371.6 1311.6,381.1 1311.6,395.4 1306.9,403.3 1306.9,420.7 1310.0,427.1 1302.1,430.3 1276.0,446.0 1270.0,470.0 1272.0,497.0 1267.0,514.0 1250.0,518.0 1224.3,524.4 1208.5,527.6 1192.6,533.9 1176.8,527.6 1157.8,537.0 1145.1,527.6 1126.0,536.0 1119.7,540.0 1126.1,552.7 1121.3,563.8 1134.0,570.1 1134.0,581.2 1148.3,587.5 1145.1,600.2 1153.0,612.9 1164.1,625.6 1167.3,650.0 1388.0,650.0 1388.0,222.0" fill="#f0f0e4"/>
<polygon points="1078.5,442.0 1116.6,442.0 1132.4,461.0 1129.2,489.5 1116.6,492.7 1097.5,489.5 1073.8,480.0 1065.8,464.2 1068.0,450.0" fill="#cfe3ba"/>
<polygon points="1030.0,484.0 1050.0,482.0 1066.0,500.0 1058.0,507.0 1036.0,498.0" fill="#d2e5bf"/>
<polygon points="1240.0,548.0 1262.0,540.0 1296.0,548.0 1292.0,588.0 1262.0,598.0 1242.0,588.0" fill="#dbe9cc"/>
<polygon points="1262.0,618.0 1300.0,610.0 1340.0,612.0 1388.0,606.0 1388.0,650.0 1250.0,650.0 1245.0,638.0" fill="#ebe6e4"/>
<polygon points="912.0,378.0 945.0,374.0 948.0,396.0 918.0,400.0" fill="#eae8e2"/>
<polygon points="852.0,505.0 880.0,500.0 885.0,528.0 852.0,532.0" fill="#ebe9e2"/>
<polygon points="1376.0,222.0 1388.0,222.0 1388.0,246.7 1366.7,289.8 1354.4,286.8 1363.6,252.8" fill="#f2dcd6" stroke="#eab0b0" stroke-width="0.8"/>
<polygon points="852.0,222.0 910.0,222.0 905.3,250.8 899.6,279.6 893.8,308.5 890.9,322.0 887.8,343.0 879.7,366.0 872.8,389.0 864.7,412.0 856.6,435.0 852.0,449.0" fill="#aad3df"/>
<polygon points="922.9,222.0 924.5,235.9 941.4,245.1 956.9,234.3 964.6,226.6 963.0,222.0" fill="#aad3df"/>
<polygon points="972.0,222.0 1024.7,222.0 1020.1,240.5 1037.0,252.8 1067.9,259.0 1058.6,277.5 1055.5,305.3 1065.0,321.6 1053.0,327.4 1045.8,336.0 1035.8,347.5 1028.5,356.2 1012.7,366.3 996.9,374.9 981.0,380.7 966.6,386.4 960.8,392.2 963.7,372.0 968.0,360.5 966.6,347.5 962.3,328.8 960.8,313.0 969.2,320.7 981.5,314.5 997.0,306.8 1009.3,296.0 1006.2,288.3 987.7,286.8 978.4,283.7 975.4,262.1 972.3,240.5" fill="#aad3df"/>
<polygon points="1068.9,322.3 1091.4,320.5 1115.6,318.8 1129.4,306.7 1132.9,310.2 1124.2,322.3 1093.1,325.7 1070.6,325.7" fill="#aad3df"/>
<polygon points="1062.0,330.0 1085.0,322.0 1110.0,326.0 1090.0,332.0 1066.0,338.0" fill="#aad3df"/>
<polygon points="852.0,572.0 876.0,573.0 899.5,565.0 915.4,555.4 931.2,550.7 945.0,548.0 946.0,551.0 932.0,555.0 916.0,560.0 900.0,569.0 876.0,578.5 852.0,577.0" fill="#aad3df"/>
<polygon points="899.0,556.0 915.0,552.0 932.0,553.0 930.0,566.0 912.0,571.0 900.0,568.0" fill="#b9dae5"/>
<defs><filter id="gb" x="-20%" y="-20%" width="140%" height="140%"><feGaussianBlur stdDeviation="1.6"/></filter></defs>
<g filter="url(#gb)"><defs><clipPath id="cT1"><rect x="852" y="222" width="198" height="110"/></clipPath><clipPath id="cT2"><rect x="1050" y="222" width="138" height="110"/></clipPath><clipPath id="cT3"><rect x="1188" y="222" width="200" height="110"/></clipPath><clipPath id="cT4"><rect x="852" y="332" width="198" height="110"/></clipPath><clipPath id="cT6"><rect x="1188" y="332" width="200" height="110"/></clipPath><clipPath id="cT7"><rect x="852" y="442" width="198" height="98"/></clipPath><clipPath id="cT8"><rect x="1050" y="442" width="138" height="98"/></clipPath><clipPath id="cT9"><rect x="1188" y="442" width="200" height="98"/></clipPath><clipPath id="cT10"><rect x="852" y="540" width="198" height="110"/></clipPath><clipPath id="cT11"><rect x="1050" y="540" width="138" height="110"/></clipPath><clipPath id="cT12"><rect x="1188" y="540" width="200" height="110"/></clipPath><clipPath id="cT5"><rect x="1050" y="332" width="138" height="110"/></clipPath></defs>
<g clip-path="url(#cT1)"></g><g clip-path="url(#cT2)"></g><g clip-path="url(#cT3)"><polygon points="1298.9,298.1 1308.4,296.5 1310.0,307.6 1300.5,308.4" fill="#cfe4bd" stroke="#cfe4bd" stroke-width="2" stroke-linejoin="round"/>
<polygon points="1319.5,325.0 1327.5,323.4 1328.3,332.0 1319.5,332.0" fill="#cfe4bd" stroke="#cfe4bd" stroke-width="2" stroke-linejoin="round"/>
<polygon points="1346.5,306.0 1354.4,305.2 1355.2,320.3 1347.3,320.3" fill="#cfe4bd" stroke="#cfe4bd" stroke-width="2" stroke-linejoin="round"/>
<polygon points="1362.3,307.6 1378.2,306.0 1377.4,320.3 1363.9,319.5" fill="#cfe4bd" stroke="#cfe4bd" stroke-width="2" stroke-linejoin="round"/>
<polygon points="1191.2,263.2 1203.8,262.4 1203.1,272.7 1192.0,272.7" fill="#cfe4bd" stroke="#cfe4bd" stroke-width="2" stroke-linejoin="round"/>
</g><g clip-path="url(#cT4)"><polygon points="994.6,368.5 1010.5,366.9 1012.1,374.8 996.2,378.0" fill="#cfe4bd" stroke="#cfe4bd" stroke-width="2" stroke-linejoin="round"/>
</g><g clip-path="url(#cT6)"><polygon points="1324.3,363.7 1340.1,364.5 1339.3,379.5 1325.1,378.8" fill="#cfe4bd" stroke="#cfe4bd" stroke-width="2" stroke-linejoin="round"/>
<polygon points="1343.3,355.8 1356.0,356.6 1355.2,368.5 1344.1,367.7" fill="#cfe4bd" stroke="#cfe4bd" stroke-width="2" stroke-linejoin="round"/>
<polygon points="1267.2,347.8 1276.7,348.6 1276.0,357.4 1268.0,356.6" fill="#cfe4bd" stroke="#cfe4bd" stroke-width="2" stroke-linejoin="round"/>
<polygon points="1359.2,347.8 1370.3,348.6 1369.5,355.8 1359.9,355.5" fill="#cfe4bd" stroke="#cfe4bd" stroke-width="2" stroke-linejoin="round"/>
</g><g clip-path="url(#cT7)"></g><g clip-path="url(#cT8)"></g><g clip-path="url(#cT10)"></g><g clip-path="url(#cT11)"><polygon points="1135.6,549.5 1154.6,551.1 1153.0,570.1 1138.7,569.3" fill="#cfe4bd" stroke="#cfe4bd" stroke-width="2" stroke-linejoin="round"/>
<polygon points="1186.3,576.5 1195.8,577.2 1195.0,592.3 1187.1,591.5" fill="#cfe4bd" stroke="#cfe4bd" stroke-width="2" stroke-linejoin="round"/>
<polygon points="1088.0,616.1 1097.5,616.9 1096.8,625.6 1088.8,624.8" fill="#cfe4bd" stroke="#cfe4bd" stroke-width="2" stroke-linejoin="round"/>
<polygon points="1216.4,565.4 1232.3,566.1 1231.5,578.0 1217.2,577.2" fill="#cfe4bd" stroke="#cfe4bd" stroke-width="2" stroke-linejoin="round"/>
<polygon points="1157.8,597.1 1164.1,597.4 1163.8,606.6 1158.1,606.2" fill="#cfe4bd" stroke="#cfe4bd" stroke-width="2" stroke-linejoin="round"/>
</g><g clip-path="url(#cT12)"><polygon points="1327.5,568.5 1351.2,569.3 1350.4,587.5 1329.0,586.8" fill="#cfe4bd" stroke="#cfe4bd" stroke-width="2" stroke-linejoin="round"/>
<polygon points="1214.9,565.4 1229.2,566.1 1228.4,574.9 1215.7,574.5" fill="#cfe4bd" stroke="#cfe4bd" stroke-width="2" stroke-linejoin="round"/>
<polygon points="1308.4,547.9 1330.6,548.7 1329.8,566.9 1309.2,566.1" fill="#cfe4bd" stroke="#cfe4bd" stroke-width="2" stroke-linejoin="round"/>
<polygon points="1264.1,587.5 1286.3,588.3 1285.5,612.9 1265.7,612.1" fill="#cfe4bd" stroke="#cfe4bd" stroke-width="2" stroke-linejoin="round"/>
<polygon points="1208.6,614.5 1219.7,614.8 1219.4,622.4 1208.9,622.1" fill="#cfe4bd" stroke="#cfe4bd" stroke-width="2" stroke-linejoin="round"/>
</g><g clip-path="url(#cT9)"><polygon points="1298.9,483.2 1308.4,483.5 1308.1,492.7 1299.3,492.4" fill="#cfe4bd" stroke="#cfe4bd" stroke-width="2" stroke-linejoin="round"/>
<polygon points="1318.0,543.4 1330.6,543.7 1330.3,552.0 1318.3,552.0" fill="#cfe4bd" stroke="#cfe4bd" stroke-width="2" stroke-linejoin="round"/>
<polygon points="1275.2,468.9 1286.3,469.3 1285.9,476.9 1275.5,476.5" fill="#cfe4bd" stroke="#cfe4bd" stroke-width="2" stroke-linejoin="round"/>
</g><g clip-path="url(#cT5)"></g></g>
<g clip-path="url(#cT1)"><ellipse cx="942" cy="246" rx="4.5" ry="3" fill="#aad3df"/>
</g><g clip-path="url(#cT2)"><ellipse cx="1063.5" cy="234.7" rx="7" ry="4.7" fill="#aad3df"/>
<ellipse cx="1095.2" cy="241.8" rx="7" ry="4.7" fill="#aad3df"/>
<ellipse cx="1134.7" cy="295.4" rx="5.5" ry="4" fill="#aad3df"/>
<ellipse cx="1054" cy="225" rx="5" ry="3" fill="#aad3df"/>
</g><g clip-path="url(#cT3)"></g><g clip-path="url(#cT4)"></g><g clip-path="url(#cT6)"></g><g clip-path="url(#cT7)"><ellipse cx="915.3" cy="481" rx="3.2" ry="4" fill="#aad3df"/>
</g><g clip-path="url(#cT8)"></g><g clip-path="url(#cT10)"></g><g clip-path="url(#cT11)"></g><g clip-path="url(#cT12)"></g><g clip-path="url(#cT9)"></g><g clip-path="url(#cT5)"></g><g clip-path="url(#cT1)"><polyline points="885.3,222.0 882.1,253.7 877.4,309.2 893.2,310.7" fill="none" stroke="#8fcaa2" stroke-width="0.9"/>
<polyline points="1004.1,301.2 1010.5,332.0" fill="none" stroke="#8fcaa2" stroke-width="0.9"/>
</g><g clip-path="url(#cT2)"></g><g clip-path="url(#cT3)"></g><g clip-path="url(#cT4)"></g><g clip-path="url(#cT6)"></g><g clip-path="url(#cT7)"></g><g clip-path="url(#cT8)"></g><g clip-path="url(#cT10)"></g><g clip-path="url(#cT11)"></g><g clip-path="url(#cT12)"></g><g clip-path="url(#cT9)"></g><g clip-path="url(#cT5)"></g><g clip-path="url(#cT1)"><polyline points="1018.4,244.2 1010.5,269.5 1010.5,296.5 1052.0,307.6" fill="none" stroke="#7fa6d6" stroke-width="0.9" stroke-dasharray="3,2"/>
</g><g clip-path="url(#cT2)"></g><g clip-path="url(#cT3)"></g><g clip-path="url(#cT4)"></g><g clip-path="url(#cT6)"></g><g clip-path="url(#cT7)"></g><g clip-path="url(#cT8)"></g><g clip-path="url(#cT10)"></g><g clip-path="url(#cT11)"></g><g clip-path="url(#cT12)"></g><g clip-path="url(#cT9)"></g><g clip-path="url(#cT5)"></g><g clip-path="url(#cT1)"><polyline points="1007.3,298.1 1020.0,301.2 1031.1,312.3 1037.4,332.0" fill="none" stroke="#b89470" stroke-width="1.0"/>
</g><g clip-path="url(#cT2)"></g><g clip-path="url(#cT3)"></g><g clip-path="url(#cT4)"></g><g clip-path="url(#cT6)"></g><g clip-path="url(#cT7)"></g><g clip-path="url(#cT8)"></g><g clip-path="url(#cT10)"></g><g clip-path="url(#cT11)"></g><g clip-path="url(#cT12)"></g><g clip-path="url(#cT9)"></g><g clip-path="url(#cT5)"></g><polyline points="910.0,222.0 905.3,250.8 899.6,279.6 893.8,308.5 890.9,322.0 887.8,343.0 879.7,366.0 872.8,389.0 864.7,412.0 856.6,435.0" fill="none" stroke="#9fd0a8" stroke-width="0.9"/>
<polyline points="1024.7,222.0 1020.1,240.5 1037.0,252.8 1067.9,259.0 1058.6,277.5 1055.5,305.3 1065.0,321.6 1053.0,327.4 1045.8,336.0 1035.8,347.5 1028.5,356.2 1012.7,366.3 996.9,374.9 981.0,380.7 966.6,386.4 960.8,392.2" fill="none" stroke="#9fd0a8" stroke-width="0.9"/>
<polyline points="963.7,372.0 968.0,360.5 966.6,347.5 962.3,328.8 960.8,313.0 969.2,320.7 981.5,314.5 997.0,306.8 1009.3,296.0 1006.2,288.3 987.7,286.8 978.4,283.7 975.4,262.1 972.3,240.5 972.0,222.0" fill="none" stroke="#9fd0a8" stroke-width="0.9"/>
<g clip-path="url(#cT1)"></g><g clip-path="url(#cT2)"><polyline points="1097.5,241.0 1103.9,253.7 1116.6,263.2" fill="none" stroke="#b0d4e2" stroke-width="1.1"/>
<polyline points="1138.7,228.3 1145.1,241.0 1151.4,245.8" fill="none" stroke="#b0d4e2" stroke-width="1.1"/>
</g><g clip-path="url(#cT3)"><polyline points="1338.6,245.8 1343.3,263.2 1340.1,285.4 1346.5,304.4 1343.3,332.0" fill="none" stroke="#b0d4e2" stroke-width="1.1"/>
<polyline points="1370.3,269.5 1378.2,285.4 1388.0,288.6" fill="none" stroke="#b0d4e2" stroke-width="1.1"/>
</g><g clip-path="url(#cT4)"></g><g clip-path="url(#cT6)"><polyline points="1292.6,335.2 1302.1,344.7 1314.8,347.8" fill="none" stroke="#b0d4e2" stroke-width="1.1"/>
<polyline points="1351.2,363.7 1362.3,376.4 1370.3,384.3" fill="none" stroke="#b0d4e2" stroke-width="1.1"/>
<polyline points="1203.8,363.7 1207.0,379.5 1219.7,392.2" fill="none" stroke="#b0d4e2" stroke-width="1.1"/>
</g><g clip-path="url(#cT7)"><polyline points="891.6,508.6 923.3,513.3 962.9,510.1 994.6,505.4 1052.0,502.2" fill="none" stroke="#b0d4e2" stroke-width="1.1"/>
<polyline points="852.0,533.9 883.7,532.3 915.4,533.9 931.2,537.1 962.9,533.9 994.6,532.3 1052.0,530.7" fill="none" stroke="#b0d4e2" stroke-width="1.1"/>
</g><g clip-path="url(#cT8)"><polyline points="1050.0,510.1 1081.7,514.9 1113.4,511.7 1145.1,516.5 1176.8,518.1 1208.5,516.5" fill="none" stroke="#b0d4e2" stroke-width="1.1"/>
<polyline points="1160.9,462.6 1170.4,470.5 1180.0,480.0" fill="none" stroke="#b0d4e2" stroke-width="1.1"/>
</g><g clip-path="url(#cT10)"></g><g clip-path="url(#cT11)"><polyline points="1173.6,540.0 1184.7,552.7 1200.6,563.8 1208.5,571.7 1224.3,584.4 1232.3,590.7" fill="none" stroke="#b0d4e2" stroke-width="1.1"/>
<polyline points="1160.9,595.5 1176.8,603.4 1192.6,614.5 1208.5,628.7" fill="none" stroke="#b0d4e2" stroke-width="1.1"/>
<polyline points="1081.7,563.8 1097.5,576.5" fill="none" stroke="#b0d4e2" stroke-width="1.1"/>
</g><g clip-path="url(#cT12)"><polyline points="1195.9,555.8 1203.8,571.7 1211.8,584.4 1227.6,590.7 1232.4,603.4 1235.5,616.1 1227.6,628.7" fill="none" stroke="#b0d4e2" stroke-width="1.1"/>
<polyline points="1338.6,559.0 1354.4,571.7 1362.3,587.5" fill="none" stroke="#b0d4e2" stroke-width="1.1"/>
<polyline points="1188.0,608.1 1195.9,612.9" fill="none" stroke="#b0d4e2" stroke-width="1.1"/>
</g><g clip-path="url(#cT9)"><polyline points="1276.7,489.5 1298.9,497.5 1305.3,508.6" fill="none" stroke="#b0d4e2" stroke-width="1.1"/>
<polyline points="1337.0,442.0 1337.0,457.8 1346.5,478.5" fill="none" stroke="#b0d4e2" stroke-width="1.1"/>
<polyline points="1362.3,457.8 1371.8,481.6" fill="none" stroke="#b0d4e2" stroke-width="1.1"/>
</g><g clip-path="url(#cT5)"><polyline points="1140.7,330.0 1143.5,341.5 1152.2,344.4" fill="none" stroke="#b0d4e2" stroke-width="1.1"/>
<polyline points="1120.5,353.0 1114.7,364.6 1107.5,373.2" fill="none" stroke="#b0d4e2" stroke-width="1.1"/>
</g><g clip-path="url(#cT1)"><polyline points="923.3,241.0 934.4,244.2 924.9,252.1 915.4,261.6 912.2,264.8" fill="none" stroke="#f7c597" stroke-width="1.05" stroke-linejoin="round"/>
<polyline points="936.0,242.6 947.1,237.8 962.9,229.9" fill="none" stroke="#f7c597" stroke-width="1.05" stroke-linejoin="round"/>
<polyline points="912.2,264.8 924.9,266.4 934.4,269.5 953.4,266.4 959.8,258.5" fill="none" stroke="#f7c597" stroke-width="1.05" stroke-linejoin="round"/>
<polyline points="912.2,264.8 905.9,274.3 904.3,285.4 910.6,298.1 918.6,307.6" fill="none" stroke="#f7c597" stroke-width="1.05" stroke-linejoin="round"/>
<polyline points="959.8,266.4 950.3,275.9 940.7,283.8 934.4,290.1" fill="none" stroke="#f7c597" stroke-width="1.05" stroke-linejoin="round"/>
<polyline points="947.1,280.6 962.9,280.6 972.4,275.9" fill="none" stroke="#f7c597" stroke-width="1.05" stroke-linejoin="round"/>
<polyline points="962.9,266.4 972.4,274.3 978.8,285.4" fill="none" stroke="#f7c597" stroke-width="1.05" stroke-linejoin="round"/>
<polyline points="918.6,307.6 928.1,310.7 940.7,304.4 950.3,309.2 953.4,317.1" fill="none" stroke="#f7c597" stroke-width="1.05" stroke-linejoin="round"/>
<polyline points="912.2,317.1 928.1,320.3 943.9,326.6 953.4,317.1" fill="none" stroke="#f7c597" stroke-width="1.05" stroke-linejoin="round"/>
<polyline points="921.7,237.8 920.1,253.7 918.6,269.5 920.1,285.4" fill="none" stroke="#f7c597" stroke-width="1.05" stroke-linejoin="round"/>
<polyline points="986.7,301.2 994.6,298.1 1004.1,298.1" fill="none" stroke="#f7c597" stroke-width="1.05" stroke-linejoin="round"/>
</g><g clip-path="url(#cT2)"><polyline points="1050.0,242.6 1059.5,228.3 1069.0,226.8 1081.7,242.6 1084.9,248.9" fill="none" stroke="#f7c597" stroke-width="1.05" stroke-linejoin="round"/>
<polyline points="1050.0,242.6 1065.8,247.4 1081.7,253.7" fill="none" stroke="#f7c597" stroke-width="1.05" stroke-linejoin="round"/>
<polyline points="1102.3,269.5 1110.2,260.0 1126.1,250.5 1135.6,242.6 1148.3,231.5 1160.9,222.0" fill="none" stroke="#f7c597" stroke-width="1.05" stroke-linejoin="round"/>
<polyline points="1145.1,222.0 1153.0,233.1 1154.6,242.6 1160.9,256.9 1167.3,274.3 1164.1,290.1" fill="none" stroke="#f7c597" stroke-width="1.05" stroke-linejoin="round"/>
<polyline points="1192.6,222.0 1199.0,231.5 1208.5,239.4 1221.2,245.8 1232.3,258.5 1250.0,266.4" fill="none" stroke="#f7c597" stroke-width="1.05" stroke-linejoin="round"/>
<polyline points="1202.1,222.0 1192.6,250.5 1186.3,266.4 1170.4,280.6 1167.3,285.4" fill="none" stroke="#f7c597" stroke-width="1.05" stroke-linejoin="round"/>
<polyline points="1081.7,288.6 1094.4,293.3 1110.2,291.7 1126.1,285.4 1141.9,275.9 1145.1,269.5" fill="none" stroke="#f7c597" stroke-width="1.05" stroke-linejoin="round"/>
<polyline points="1094.4,293.3 1105.5,294.9 1121.3,299.7 1137.2,310.7 1145.1,312.3 1146.7,320.3 1145.1,332.0" fill="none" stroke="#f7c597" stroke-width="1.05" stroke-linejoin="round"/>
<polyline points="1141.9,275.9 1143.5,294.9 1145.1,304.4" fill="none" stroke="#f7c597" stroke-width="1.05" stroke-linejoin="round"/>
<polyline points="1170.4,290.1 1184.7,285.4 1195.8,279.1 1205.3,274.3" fill="none" stroke="#f7c597" stroke-width="1.05" stroke-linejoin="round"/>
<polyline points="1240.2,242.6 1232.3,266.4 1227.5,285.4 1216.4,288.6" fill="none" stroke="#f7c597" stroke-width="1.05" stroke-linejoin="round"/>
<polyline points="1186.3,253.7 1202.1,258.5 1208.5,261.6" fill="none" stroke="#f7c597" stroke-width="1.05" stroke-linejoin="round"/>
<polyline points="1145.1,326.6 1176.8,326.6 1208.5,321.8 1240.2,310.7" fill="none" stroke="#f7c597" stroke-width="1.05" stroke-linejoin="round"/>
<polyline points="1081.7,301.2 1065.8,307.6 1059.5,310.7" fill="none" stroke="#f7c597" stroke-width="1.05" stroke-linejoin="round"/>
</g><g clip-path="url(#cT3)"><polyline points="1188.0,229.9 1203.8,237.8 1219.7,245.8 1230.8,258.5 1243.5,263.2 1264.1,268.0 1276.7,268.0" fill="none" stroke="#f7c597" stroke-width="1.05" stroke-linejoin="round"/>
<polyline points="1205.4,222.0 1197.5,234.7 1188.0,253.7" fill="none" stroke="#f7c597" stroke-width="1.05" stroke-linejoin="round"/>
<polyline points="1188.0,255.3 1197.5,258.5 1207.0,263.2" fill="none" stroke="#f7c597" stroke-width="1.05" stroke-linejoin="round"/>
<polyline points="1240.3,242.6 1234.0,260.0 1229.2,266.4 1229.2,275.9 1224.5,282.2 1214.9,287.0" fill="none" stroke="#f7c597" stroke-width="1.05" stroke-linejoin="round"/>
<polyline points="1262.5,222.0 1264.1,231.5 1270.4,247.4 1275.2,264.8 1273.6,277.5 1262.5,291.7 1251.4,310.7 1241.9,332.0" fill="none" stroke="#f7c597" stroke-width="1.05" stroke-linejoin="round"/>
<polyline points="1283.1,222.0 1291.0,234.7 1298.9,247.4 1306.9,252.1 1291.0,261.6 1289.4,275.9 1295.8,285.4" fill="none" stroke="#f7c597" stroke-width="1.05" stroke-linejoin="round"/>
<polyline points="1316.4,255.3 1330.6,261.6 1338.6,271.1 1349.6,274.3" fill="none" stroke="#f7c597" stroke-width="1.05" stroke-linejoin="round"/>
<polyline points="1311.6,289.4 1330.6,290.1 1346.5,288.6" fill="none" stroke="#f7c597" stroke-width="1.05" stroke-linejoin="round"/>
<polyline points="1257.7,312.3 1264.1,317.1 1275.2,323.4 1276.7,332.0" fill="none" stroke="#f7c597" stroke-width="1.05" stroke-linejoin="round"/>
<polyline points="1188.0,285.4 1195.9,277.5 1203.8,275.9" fill="none" stroke="#f7c597" stroke-width="1.05" stroke-linejoin="round"/>
<polyline points="1224.5,317.1 1235.5,310.7 1251.4,307.6" fill="none" stroke="#f7c597" stroke-width="1.05" stroke-linejoin="round"/>
<polyline points="1388.0,301.2 1378.2,310.7 1362.3,332.0" fill="none" stroke="#f7c597" stroke-width="1.05" stroke-linejoin="round"/>
<polyline points="1362.3,222.0 1359.2,234.7" fill="none" stroke="#f7c597" stroke-width="1.05" stroke-linejoin="round"/>
</g><g clip-path="url(#cT4)"><polyline points="915.4,332.0 918.6,341.5 931.2,351.0" fill="none" stroke="#f7c597" stroke-width="1.05" stroke-linejoin="round"/>
<polyline points="940.7,332.0 947.1,341.5 962.9,347.8 964.5,363.7 962.9,376.4" fill="none" stroke="#f7c597" stroke-width="1.05" stroke-linejoin="round"/>
<polyline points="912.2,357.4 924.9,360.5" fill="none" stroke="#f7c597" stroke-width="1.05" stroke-linejoin="round"/>
<polyline points="902.7,363.7 912.2,368.5 928.1,371.6 947.1,371.6 962.9,368.5" fill="none" stroke="#f7c597" stroke-width="1.05" stroke-linejoin="round"/>
<polyline points="883.7,392.2 893.2,398.6 899.5,408.1 909.1,414.4 924.9,417.6 940.7,414.4" fill="none" stroke="#f7c597" stroke-width="1.05" stroke-linejoin="round"/>
<polyline points="947.1,414.4 931.2,427.1 923.3,442.0" fill="none" stroke="#f7c597" stroke-width="1.05" stroke-linejoin="round"/>
<polyline points="886.9,411.2 890.0,420.7 886.9,442.0" fill="none" stroke="#f7c597" stroke-width="1.05" stroke-linejoin="round"/>
<polyline points="904.3,427.1 909.1,442.0" fill="none" stroke="#f7c597" stroke-width="1.05" stroke-linejoin="round"/>
<polyline points="972.4,420.7 986.7,427.1 1010.5,430.3 1026.3,423.9" fill="none" stroke="#f7c597" stroke-width="1.05" stroke-linejoin="round"/>
<polyline points="1026.3,376.4 1034.3,379.5 1052.0,385.9" fill="none" stroke="#f7c597" stroke-width="1.05" stroke-linejoin="round"/>
<polyline points="962.9,376.4 972.4,379.5" fill="none" stroke="#f7c597" stroke-width="1.05" stroke-linejoin="round"/>
</g><g clip-path="url(#cT6)"><polyline points="1273.6,332.0 1276.7,344.7 1283.1,349.4 1295.8,355.8" fill="none" stroke="#f7c597" stroke-width="1.05" stroke-linejoin="round"/>
<polyline points="1308.4,363.7 1322.7,363.7 1337.0,358.9 1352.8,352.6 1371.8,349.4 1388.0,352.6" fill="none" stroke="#f7c597" stroke-width="1.05" stroke-linejoin="round"/>
<polyline points="1362.3,332.0 1357.6,344.7 1362.3,360.5 1371.8,368.5 1375.0,387.5 1375.0,400.1" fill="none" stroke="#f7c597" stroke-width="1.05" stroke-linejoin="round"/>
<polyline points="1314.8,365.3 1313.2,379.5 1325.9,389.1 1327.5,404.9" fill="none" stroke="#f7c597" stroke-width="1.05" stroke-linejoin="round"/>
<polyline points="1272.0,378.0 1283.1,378.0 1297.4,381.1 1302.1,390.6 1289.4,392.2 1276.7,404.9" fill="none" stroke="#f7c597" stroke-width="1.05" stroke-linejoin="round"/>
<polyline points="1199.1,332.0 1195.9,341.5 1200.7,351.0 1203.8,366.9 1200.7,379.5" fill="none" stroke="#f7c597" stroke-width="1.05" stroke-linejoin="round"/>
<polyline points="1219.7,332.0 1226.0,341.5 1243.5,351.0 1254.6,370.0" fill="none" stroke="#f7c597" stroke-width="1.05" stroke-linejoin="round"/>
<polyline points="1327.5,404.9 1330.6,420.7 1338.6,442.0" fill="none" stroke="#f7c597" stroke-width="1.05" stroke-linejoin="round"/>
<polyline points="1188.0,341.5 1203.8,336.8 1219.7,335.2" fill="none" stroke="#f7c597" stroke-width="1.05" stroke-linejoin="round"/>
<polyline points="1368.7,420.7 1359.2,433.4 1346.5,442.0" fill="none" stroke="#f7c597" stroke-width="1.05" stroke-linejoin="round"/>
<polyline points="1235.5,341.5 1241.9,351.0" fill="none" stroke="#f7c597" stroke-width="1.05" stroke-linejoin="round"/>
</g><g clip-path="url(#cT7)"><polyline points="899.5,442.0 898.0,451.5 904.3,461.0" fill="none" stroke="#f7c597" stroke-width="1.05" stroke-linejoin="round"/>
<polyline points="915.4,446.8 920.1,442.0" fill="none" stroke="#f7c597" stroke-width="1.05" stroke-linejoin="round"/>
<polyline points="940.7,442.0 942.3,457.8" fill="none" stroke="#f7c597" stroke-width="1.05" stroke-linejoin="round"/>
<polyline points="934.4,470.5 947.1,483.2 953.4,497.5 940.7,502.2 931.2,508.6 912.2,511.7 899.5,516.5" fill="none" stroke="#f7c597" stroke-width="1.05" stroke-linejoin="round"/>
<polyline points="886.9,470.5 899.5,468.9 912.2,462.6" fill="none" stroke="#f7c597" stroke-width="1.05" stroke-linejoin="round"/>
<polyline points="947.1,483.2 962.9,476.9 983.5,473.7" fill="none" stroke="#f7c597" stroke-width="1.05" stroke-linejoin="round"/>
<polyline points="912.2,511.7 915.4,521.2 931.2,524.4 940.7,530.7 943.9,537.1" fill="none" stroke="#f7c597" stroke-width="1.05" stroke-linejoin="round"/>
<polyline points="991.5,486.4 1002.6,489.5 1010.5,502.2 1026.3,505.4" fill="none" stroke="#f7c597" stroke-width="1.05" stroke-linejoin="round"/>
<polyline points="962.9,521.2 978.8,518.1 988.3,521.2" fill="none" stroke="#f7c597" stroke-width="1.05" stroke-linejoin="round"/>
<polyline points="1010.5,518.1 1026.3,516.5 1042.2,511.7" fill="none" stroke="#f7c597" stroke-width="1.05" stroke-linejoin="round"/>
<polyline points="1034.3,537.1 1052.0,533.9" fill="none" stroke="#f7c597" stroke-width="1.05" stroke-linejoin="round"/>
<polyline points="923.3,489.5 934.4,502.2" fill="none" stroke="#f7c597" stroke-width="1.05" stroke-linejoin="round"/>
<polyline points="852.0,514.9 861.5,511.7" fill="none" stroke="#f7c597" stroke-width="1.05" stroke-linejoin="round"/>
</g><g clip-path="url(#cT8)"><polyline points="1089.6,442.0 1091.2,465.8 1096.0,481.6" fill="none" stroke="#f7c597" stroke-width="1.05" stroke-linejoin="round"/>
<polyline points="1110.2,442.0 1107.1,454.7 1097.5,462.6 1081.7,465.8" fill="none" stroke="#f7c597" stroke-width="1.05" stroke-linejoin="round"/>
<polyline points="1180.0,457.8 1180.0,473.7 1176.8,494.3" fill="none" stroke="#f7c597" stroke-width="1.05" stroke-linejoin="round"/>
<polyline points="1145.1,470.5 1138.7,480.0" fill="none" stroke="#f7c597" stroke-width="1.05" stroke-linejoin="round"/>
<polyline points="1208.5,454.7 1224.3,449.9 1250.0,442.0" fill="none" stroke="#f7c597" stroke-width="1.05" stroke-linejoin="round"/>
<polyline points="1186.3,467.4 1208.5,470.5 1224.3,473.7" fill="none" stroke="#f7c597" stroke-width="1.05" stroke-linejoin="round"/>
<polyline points="1232.3,451.5 1237.0,465.8 1232.3,481.6" fill="none" stroke="#f7c597" stroke-width="1.05" stroke-linejoin="round"/>
<polyline points="1192.6,513.3 1200.6,524.4 1208.5,537.1 1208.5,552.0" fill="none" stroke="#f7c597" stroke-width="1.05" stroke-linejoin="round"/>
<polyline points="1224.3,497.5 1232.3,513.3 1232.3,537.1 1240.2,552.0" fill="none" stroke="#f7c597" stroke-width="1.05" stroke-linejoin="round"/>
<polyline points="1050.0,526.0 1065.8,533.9 1078.5,537.1" fill="none" stroke="#f7c597" stroke-width="1.05" stroke-linejoin="round"/>
<polyline points="1145.1,537.1 1160.9,540.3 1176.8,543.4" fill="none" stroke="#f7c597" stroke-width="1.05" stroke-linejoin="round"/>
<polyline points="1153.0,467.4 1160.9,468.9 1170.4,473.7" fill="none" stroke="#f7c597" stroke-width="1.05" stroke-linejoin="round"/>
<polyline points="1200.6,489.5 1216.4,502.2 1224.3,508.6" fill="none" stroke="#f7c597" stroke-width="1.05" stroke-linejoin="round"/>
</g><g clip-path="url(#cT10)"><polyline points="947.1,554.3 962.9,552.7 978.8,559.0 982.0,571.7" fill="none" stroke="#f7c597" stroke-width="1.05" stroke-linejoin="round"/>
<polyline points="953.4,600.2 972.4,603.4 978.8,609.7" fill="none" stroke="#f7c597" stroke-width="1.05" stroke-linejoin="round"/>
<polyline points="962.9,579.6 969.3,600.2" fill="none" stroke="#f7c597" stroke-width="1.05" stroke-linejoin="round"/>
<polyline points="899.5,635.1 912.2,612.9 918.6,603.4" fill="none" stroke="#f7c597" stroke-width="1.05" stroke-linejoin="round"/>
<polyline points="982.0,628.7 994.6,635.1 1010.5,631.9" fill="none" stroke="#f7c597" stroke-width="1.05" stroke-linejoin="round"/>
<polyline points="1026.3,584.4 1039.0,590.7 1052.0,597.1" fill="none" stroke="#f7c597" stroke-width="1.05" stroke-linejoin="round"/>
<polyline points="852.0,595.5 867.8,600.2 875.8,592.3" fill="none" stroke="#f7c597" stroke-width="1.05" stroke-linejoin="round"/>
<polyline points="855.2,635.1 871.0,641.4 883.7,635.1" fill="none" stroke="#f7c597" stroke-width="1.05" stroke-linejoin="round"/>
<polyline points="918.6,635.1 931.2,628.7 940.7,635.1 950.3,650.0" fill="none" stroke="#f7c597" stroke-width="1.05" stroke-linejoin="round"/>
</g><g clip-path="url(#cT11)"><polyline points="1051.6,540.0 1053.2,555.8 1059.5,565.4" fill="none" stroke="#f7c597" stroke-width="1.05" stroke-linejoin="round"/>
<polyline points="1084.9,540.0 1081.7,555.8 1070.6,562.2 1057.9,565.4" fill="none" stroke="#f7c597" stroke-width="1.05" stroke-linejoin="round"/>
<polyline points="1070.6,562.2 1073.8,574.9 1081.7,584.4 1086.5,603.4 1091.2,619.2 1105.5,622.4 1121.3,617.7 1137.2,620.8 1148.3,616.1" fill="none" stroke="#f7c597" stroke-width="1.05" stroke-linejoin="round"/>
<polyline points="1061.1,581.2 1081.7,584.4 1097.5,579.6 1113.4,576.5 1132.4,571.7 1148.3,571.7 1160.9,574.9" fill="none" stroke="#f7c597" stroke-width="1.05" stroke-linejoin="round"/>
<polyline points="1050.0,601.8 1061.1,611.3 1069.0,619.2 1073.8,635.1 1078.5,650.0" fill="none" stroke="#f7c597" stroke-width="1.05" stroke-linejoin="round"/>
<polyline points="1070.6,619.2 1097.5,606.6 1116.6,597.1" fill="none" stroke="#f7c597" stroke-width="1.05" stroke-linejoin="round"/>
<polyline points="1110.2,540.0 1121.3,547.9 1145.1,546.3 1164.1,540.0" fill="none" stroke="#f7c597" stroke-width="1.05" stroke-linejoin="round"/>
<polyline points="1153.0,554.3 1173.6,563.8 1192.6,571.7 1208.5,579.6 1216.4,589.1 1224.3,600.2" fill="none" stroke="#f7c597" stroke-width="1.05" stroke-linejoin="round"/>
<polyline points="1176.8,565.4 1164.1,578.0 1160.9,584.4" fill="none" stroke="#f7c597" stroke-width="1.05" stroke-linejoin="round"/>
<polyline points="1151.4,540.0 1154.6,549.5 1151.4,574.9" fill="none" stroke="#f7c597" stroke-width="1.05" stroke-linejoin="round"/>
<polyline points="1176.8,611.3 1184.7,622.4 1208.5,619.2 1224.3,619.2" fill="none" stroke="#f7c597" stroke-width="1.05" stroke-linejoin="round"/>
<polyline points="1176.8,622.4 1170.4,635.1 1168.9,650.0" fill="none" stroke="#f7c597" stroke-width="1.05" stroke-linejoin="round"/>
<polyline points="1192.6,540.0 1189.5,563.8 1184.7,571.7" fill="none" stroke="#f7c597" stroke-width="1.05" stroke-linejoin="round"/>
<polyline points="1208.5,635.1 1224.3,628.7" fill="none" stroke="#f7c597" stroke-width="1.05" stroke-linejoin="round"/>
<polyline points="1145.1,603.4 1160.9,619.2 1170.4,628.7" fill="none" stroke="#f7c597" stroke-width="1.05" stroke-linejoin="round"/>
</g><g clip-path="url(#cT12)"><polyline points="1188.0,571.7 1200.7,578.0 1211.8,587.5 1222.9,595.5" fill="none" stroke="#f7c597" stroke-width="1.05" stroke-linejoin="round"/>
<polyline points="1235.5,540.0 1234.0,555.8 1232.4,579.6" fill="none" stroke="#f7c597" stroke-width="1.05" stroke-linejoin="round"/>
<polyline points="1273.6,540.0 1270.4,555.8 1267.2,563.8" fill="none" stroke="#f7c597" stroke-width="1.05" stroke-linejoin="round"/>
<polyline points="1188.0,559.0 1195.9,552.7 1203.8,540.0" fill="none" stroke="#f7c597" stroke-width="1.05" stroke-linejoin="round"/>
<polyline points="1291.0,568.5 1306.9,566.9 1325.9,566.9 1340.1,563.8 1354.4,560.6 1370.3,552.7 1388.0,547.9" fill="none" stroke="#f7c597" stroke-width="1.05" stroke-linejoin="round"/>
<polyline points="1362.3,540.0 1370.3,555.8 1378.2,571.7 1388.0,581.2" fill="none" stroke="#f7c597" stroke-width="1.05" stroke-linejoin="round"/>
<polyline points="1346.5,587.5 1354.4,595.5 1362.3,600.2 1388.0,597.1" fill="none" stroke="#f7c597" stroke-width="1.05" stroke-linejoin="round"/>
<polyline points="1188.0,622.4 1203.8,619.2 1219.7,616.1" fill="none" stroke="#f7c597" stroke-width="1.05" stroke-linejoin="round"/>
<polyline points="1203.8,641.4 1219.7,631.9 1227.6,622.4" fill="none" stroke="#f7c597" stroke-width="1.05" stroke-linejoin="round"/>
<polyline points="1222.9,595.5 1235.5,587.5 1243.5,584.4" fill="none" stroke="#f7c597" stroke-width="1.05" stroke-linejoin="round"/>
<polyline points="1359.2,563.8 1360.7,587.5 1362.3,603.4" fill="none" stroke="#f7c597" stroke-width="1.05" stroke-linejoin="round"/>
<polyline points="1298.9,608.1 1314.8,619.2 1327.5,622.4" fill="none" stroke="#f7c597" stroke-width="1.05" stroke-linejoin="round"/>
</g><g clip-path="url(#cT9)"><polyline points="1188.0,483.2 1197.5,480.0 1207.0,473.7" fill="none" stroke="#f7c597" stroke-width="1.05" stroke-linejoin="round"/>
<polyline points="1203.8,454.7 1216.5,451.5 1235.5,454.7 1245.1,449.9" fill="none" stroke="#f7c597" stroke-width="1.05" stroke-linejoin="round"/>
<polyline points="1235.5,461.0 1237.1,481.6 1240.3,489.5 1251.4,502.2 1262.5,507.0" fill="none" stroke="#f7c597" stroke-width="1.05" stroke-linejoin="round"/>
<polyline points="1216.5,494.3 1230.8,497.5 1229.2,513.3 1232.4,537.1 1229.2,552.0" fill="none" stroke="#f7c597" stroke-width="1.05" stroke-linejoin="round"/>
<polyline points="1188.0,499.1 1203.8,502.2 1216.5,494.3" fill="none" stroke="#f7c597" stroke-width="1.05" stroke-linejoin="round"/>
<polyline points="1286.3,442.0 1279.9,457.8 1273.6,473.7" fill="none" stroke="#f7c597" stroke-width="1.05" stroke-linejoin="round"/>
<polyline points="1314.8,457.8 1330.6,456.3 1340.1,448.3" fill="none" stroke="#f7c597" stroke-width="1.05" stroke-linejoin="round"/>
<polyline points="1276.7,508.6 1289.4,508.6 1308.4,508.6 1327.5,510.1 1346.5,511.7 1362.3,510.1 1388.0,511.7" fill="none" stroke="#f7c597" stroke-width="1.05" stroke-linejoin="round"/>
<polyline points="1311.6,478.5 1321.1,489.5 1327.5,508.6" fill="none" stroke="#f7c597" stroke-width="1.05" stroke-linejoin="round"/>
<polyline points="1333.8,511.7 1340.1,530.7 1354.4,552.0" fill="none" stroke="#f7c597" stroke-width="1.05" stroke-linejoin="round"/>
<polyline points="1378.2,521.2 1388.0,537.1" fill="none" stroke="#f7c597" stroke-width="1.05" stroke-linejoin="round"/>
<polyline points="1235.5,543.4 1257.7,540.3 1276.7,533.9 1289.4,530.7" fill="none" stroke="#f7c597" stroke-width="1.05" stroke-linejoin="round"/>
<polyline points="1386.1,442.0 1375.0,445.2" fill="none" stroke="#f7c597" stroke-width="1.05" stroke-linejoin="round"/>
<polyline points="1259.3,537.1 1267.2,527.6 1276.7,521.2" fill="none" stroke="#f7c597" stroke-width="1.05" stroke-linejoin="round"/>
</g><g clip-path="url(#cT5)"><polyline points="1060.0,347.3 1074.4,338.6 1088.8,334.3 1103.2,330.0" fill="none" stroke="#f7c597" stroke-width="1.05" stroke-linejoin="round"/>
<polyline points="1140.7,330.0 1134.9,338.6 1126.3,343.0" fill="none" stroke="#f7c597" stroke-width="1.05" stroke-linejoin="round"/>
<polyline points="1060.0,390.5 1074.4,387.6 1088.8,391.9" fill="none" stroke="#f7c597" stroke-width="1.05" stroke-linejoin="round"/>
<polyline points="1153.6,387.6 1160.8,394.8 1180.0,390.5" fill="none" stroke="#f7c597" stroke-width="1.05" stroke-linejoin="round"/>
<polyline points="1120.5,373.2 1123.4,387.6 1132.0,396.3 1140.7,402.0" fill="none" stroke="#f7c597" stroke-width="1.05" stroke-linejoin="round"/>
</g><g clip-path="url(#cT1)"><polyline points="891.6,222.0 894.8,231.5 894.8,242.6 904.3,244.2 901.1,269.5 894.8,293.3 890.0,332.0" fill="none" stroke="#b8a2c0" stroke-width="1.0" stroke-linejoin="round"/>
<polyline points="989.9,222.0 1002.6,250.5 1023.2,275.9 1052.0,271.1" fill="none" stroke="#b8a2c0" stroke-width="1.0" stroke-linejoin="round"/>
<polyline points="1023.2,275.9 1020.0,301.2 1005.7,310.7 966.1,332.0" fill="none" stroke="#b8a2c0" stroke-width="1.0" stroke-linejoin="round"/>
</g><g clip-path="url(#cT2)"><polyline points="1081.7,255.3 1094.4,264.8 1102.3,271.1 1113.4,275.9 1119.7,298.1 1118.1,304.4 1129.2,310.7" fill="none" stroke="#b8a2c0" stroke-width="1.0" stroke-linejoin="round"/>
<polyline points="1094.4,264.8 1102.3,261.6 1113.4,258.5 1122.9,255.3 1129.2,261.6 1138.7,258.5 1148.3,253.7 1160.9,242.6 1170.4,233.1 1180.0,231.5 1186.3,236.3 1192.6,229.9 1200.6,222.0" fill="none" stroke="#b8a2c0" stroke-width="1.0" stroke-linejoin="round"/>
<polyline points="1149.8,279.1 1151.4,293.3 1157.8,299.7 1170.4,301.2 1184.7,306.0 1192.6,317.1 1202.1,317.1 1216.4,318.7 1218.0,307.6 1232.3,304.4 1250.0,309.2" fill="none" stroke="#b8a2c0" stroke-width="1.0" stroke-linejoin="round"/>
</g><g clip-path="url(#cT3)"><polyline points="1188.0,310.7 1194.3,318.7 1207.0,317.1 1216.5,318.7 1218.1,309.2 1235.5,304.4 1251.4,310.7" fill="none" stroke="#b8a2c0" stroke-width="1.0" stroke-linejoin="round"/>
<polyline points="1297.4,222.0 1305.3,231.5 1305.3,245.8 1313.2,253.7" fill="none" stroke="#b8a2c0" stroke-width="1.0" stroke-linejoin="round"/>
<polyline points="1200.7,222.0 1188.0,236.3" fill="none" stroke="#b8a2c0" stroke-width="1.0" stroke-linejoin="round"/>
</g><g clip-path="url(#cT4)"></g><g clip-path="url(#cT6)"></g><g clip-path="url(#cT7)"><polyline points="921.7,442.0 924.9,457.8 920.1,473.7" fill="none" stroke="#b8a2c0" stroke-width="1.0" stroke-linejoin="round"/>
<polyline points="926.5,489.5 940.7,494.3 950.3,514.9 962.9,518.1" fill="none" stroke="#b8a2c0" stroke-width="1.0" stroke-linejoin="round"/>
</g><g clip-path="url(#cT8)"></g><g clip-path="url(#cT10)"></g><g clip-path="url(#cT11)"><polyline points="1073.8,546.3 1084.9,557.4 1103.9,562.2 1110.2,571.7 1121.3,578.0 1126.1,587.5 1135.6,608.1 1132.4,612.9 1102.3,611.3 1103.9,635.1 1105.5,650.0" fill="none" stroke="#b8a2c0" stroke-width="1.0" stroke-linejoin="round"/>
</g><g clip-path="url(#cT12)"></g><g clip-path="url(#cT9)"></g><g clip-path="url(#cT5)"></g><g clip-path="url(#cT1)"><polyline points="917.0,222.0 918.6,234.7 924.9,241.0 926.5,264.8 924.9,275.9 931.2,288.6 931.2,301.2 918.6,310.7 904.3,332.0" fill="none" stroke="#999999" stroke-width="1.05" stroke-linejoin="round"/>
<polyline points="931.2,301.2 947.1,304.4 962.9,310.7 974.0,307.6 983.5,299.7 1007.3,296.5" fill="none" stroke="#999999" stroke-width="1.05" stroke-linejoin="round"/>
<polyline points="959.8,313.9 961.4,332.0" fill="none" stroke="#999999" stroke-width="1.05" stroke-linejoin="round"/>
<polyline points="1026.3,237.8 1018.4,242.6" fill="none" stroke="#999999" stroke-width="1.05" stroke-linejoin="round"/>
</g><g clip-path="url(#cT2)"><polyline points="1113.4,222.0 1126.1,237.8 1138.7,256.9 1148.3,269.5 1157.8,274.3 1164.1,294.9 1164.1,304.4 1170.4,317.1 1167.3,332.0" fill="none" stroke="#999999" stroke-width="1.05" stroke-linejoin="round"/>
<polyline points="1164.1,294.9 1186.3,294.1 1208.5,287.0 1216.4,269.5 1224.3,222.0" fill="none" stroke="#999999" stroke-width="1.05" stroke-linejoin="round"/>
</g><g clip-path="url(#cT3)"><polyline points="1224.5,222.0 1219.7,245.8 1210.2,285.4 1188.0,294.9" fill="none" stroke="#999999" stroke-width="1.05" stroke-linejoin="round"/>
<polyline points="1283.1,275.9 1273.6,291.7 1257.7,299.7 1251.4,313.9 1238.7,332.0" fill="none" stroke="#999999" stroke-width="1.05" stroke-linejoin="round"/>
<polyline points="1254.6,313.9 1275.2,321.8 1291.0,332.0" fill="none" stroke="#999999" stroke-width="1.05" stroke-linejoin="round"/>
<polyline points="1360.7,222.0 1356.0,248.9 1349.6,282.2 1351.2,294.9 1354.4,332.0" fill="none" stroke="#999999" stroke-width="1.05" stroke-linejoin="round"/>
<polyline points="1354.4,252.1 1370.3,252.1 1388.0,256.9" fill="none" stroke="#999999" stroke-width="1.05" stroke-linejoin="round"/>
<polyline points="1351.2,291.7 1362.3,294.9 1378.2,301.2 1388.0,299.7" fill="none" stroke="#999999" stroke-width="1.05" stroke-linejoin="round"/>
</g><g clip-path="url(#cT4)"><polyline points="899.5,332.0 901.1,339.9 909.1,347.8 921.7,355.8 924.9,366.9 924.9,382.7 928.1,385.9 943.9,395.4 950.3,406.5 956.6,420.7 962.9,442.0" fill="none" stroke="#999999" stroke-width="1.05" stroke-linejoin="round"/>
<polyline points="956.6,332.0 956.6,346.3 947.1,354.2 931.2,363.7 924.9,366.9" fill="none" stroke="#999999" stroke-width="1.05" stroke-linejoin="round"/>
<polyline points="877.4,387.5 899.5,382.7 912.2,384.3 924.9,382.7" fill="none" stroke="#999999" stroke-width="1.05" stroke-linejoin="round"/>
<polyline points="852.0,427.1 875.8,420.7 899.5,414.4 918.6,400.1 940.7,398.6 966.1,401.7 983.5,411.2 989.9,427.1 994.6,442.0" fill="none" stroke="#999999" stroke-width="1.05" stroke-linejoin="round"/>
<polyline points="896.4,403.3 899.5,387.5 896.4,363.7 909.1,347.8" fill="none" stroke="#999999" stroke-width="1.05" stroke-linejoin="round"/>
<polyline points="871.0,442.0 883.7,411.2 893.2,403.3 899.5,387.5" fill="none" stroke="#999999" stroke-width="1.05" stroke-linejoin="round"/>
<polyline points="943.9,395.4 953.4,401.7 972.4,406.5 994.6,411.2" fill="none" stroke="#999999" stroke-width="1.05" stroke-linejoin="round"/>
<polyline points="962.9,401.7 978.8,397.0 1010.5,385.9 1034.3,363.7 1052.0,355.8" fill="none" stroke="#999999" stroke-width="1.05" stroke-linejoin="round"/>
</g><g clip-path="url(#cT6)"><polyline points="1291.0,332.0 1298.9,346.3 1294.2,351.0 1308.4,366.9 1327.5,385.9 1329.0,404.9" fill="none" stroke="#999999" stroke-width="1.05" stroke-linejoin="round"/>
<polyline points="1354.4,332.0 1356.0,344.7 1351.2,363.7 1352.8,379.5 1359.2,398.6 1378.2,416.0 1388.0,435.0" fill="none" stroke="#999999" stroke-width="1.05" stroke-linejoin="round"/>
<polyline points="1235.5,332.0 1234.0,341.5 1226.0,351.0 1213.4,352.6" fill="none" stroke="#999999" stroke-width="1.05" stroke-linejoin="round"/>
<polyline points="1226.0,351.0 1226.0,360.5" fill="none" stroke="#999999" stroke-width="1.05" stroke-linejoin="round"/>
<polyline points="1230.8,379.5 1240.3,392.2 1256.1,406.5 1270.4,420.7" fill="none" stroke="#999999" stroke-width="1.05" stroke-linejoin="round"/>
<polyline points="1243.5,406.5 1251.4,419.2 1283.1,406.5 1327.5,404.9 1359.2,398.6" fill="none" stroke="#999999" stroke-width="1.05" stroke-linejoin="round"/>
<polyline points="1314.8,409.7 1322.7,417.6 1346.5,417.6 1362.3,408.1 1388.0,414.4" fill="none" stroke="#999999" stroke-width="1.05" stroke-linejoin="round"/>
<polyline points="1381.3,390.6 1373.4,408.1" fill="none" stroke="#999999" stroke-width="1.05" stroke-linejoin="round"/>
<polyline points="1298.9,430.3 1314.8,435.0 1330.6,436.6" fill="none" stroke="#999999" stroke-width="1.05" stroke-linejoin="round"/>
</g><g clip-path="url(#cT7)"><polyline points="852.0,467.4 864.7,457.8 883.7,453.1 899.5,457.8 912.2,468.9 931.2,472.1 940.7,468.9 955.0,461.0 970.9,462.6" fill="none" stroke="#999999" stroke-width="1.05" stroke-linejoin="round"/>
<polyline points="852.0,478.5 875.8,481.6 899.5,489.5 918.6,486.4 931.2,480.0 940.7,470.5" fill="none" stroke="#999999" stroke-width="1.05" stroke-linejoin="round"/>
<polyline points="880.5,451.5 883.7,465.8 875.8,481.6 864.7,508.6 867.8,524.4 880.5,530.7 899.5,540.3 928.1,538.7 955.0,535.5 978.8,532.3 1002.6,530.7 1026.3,521.2 1052.0,516.5" fill="none" stroke="#999999" stroke-width="1.05" stroke-linejoin="round"/>
<polyline points="898.0,461.0 896.4,473.7 899.5,489.5" fill="none" stroke="#999999" stroke-width="1.05" stroke-linejoin="round"/>
<polyline points="875.8,521.2 883.7,533.9 896.4,543.4 899.5,552.0" fill="none" stroke="#999999" stroke-width="1.05" stroke-linejoin="round"/>
<polyline points="982.0,473.7 994.6,502.2 1002.6,518.1 1004.1,552.0" fill="none" stroke="#999999" stroke-width="1.05" stroke-linejoin="round"/>
<polyline points="953.4,442.0 951.8,461.0" fill="none" stroke="#999999" stroke-width="1.05" stroke-linejoin="round"/>
<polyline points="999.4,468.9 1012.1,473.7 1052.0,478.5" fill="none" stroke="#999999" stroke-width="1.05" stroke-linejoin="round"/>
</g><g clip-path="url(#cT8)"><polyline points="1050.0,476.9 1073.8,481.6 1097.5,489.5 1113.4,494.3 1129.2,495.9" fill="none" stroke="#999999" stroke-width="1.05" stroke-linejoin="round"/>
<polyline points="1050.0,510.1 1065.8,511.7 1081.7,519.7 1102.3,518.1 1129.2,513.3 1145.1,508.6 1160.9,505.4" fill="none" stroke="#999999" stroke-width="1.05" stroke-linejoin="round"/>
<polyline points="1145.1,511.7 1160.9,526.0 1184.7,537.1 1200.6,545.0" fill="none" stroke="#999999" stroke-width="1.05" stroke-linejoin="round"/>
<polyline points="1160.9,442.0 1176.8,445.2 1192.6,449.9 1208.5,454.7" fill="none" stroke="#999999" stroke-width="1.05" stroke-linejoin="round"/>
<polyline points="1192.6,464.2 1208.5,468.9 1224.3,480.0 1250.0,492.7" fill="none" stroke="#999999" stroke-width="1.05" stroke-linejoin="round"/>
<polyline points="1180.0,502.2 1208.5,510.1 1240.2,508.6 1250.0,510.1" fill="none" stroke="#999999" stroke-width="1.05" stroke-linejoin="round"/>
<polyline points="1103.9,511.7 1103.9,537.1" fill="none" stroke="#999999" stroke-width="1.05" stroke-linejoin="round"/>
<polyline points="1050.0,537.1 1065.8,540.3 1081.7,537.1 1097.5,540.3" fill="none" stroke="#999999" stroke-width="1.05" stroke-linejoin="round"/>
</g><g clip-path="url(#cT10)"><polyline points="863.1,622.4 904.3,606.6 975.6,612.9 1010.5,603.4 1052.0,555.8" fill="none" stroke="#999999" stroke-width="1.05" stroke-linejoin="round"/>
<polyline points="888.5,549.5 899.5,581.2 909.1,600.2 915.4,650.0" fill="none" stroke="#999999" stroke-width="1.05" stroke-linejoin="round"/>
<polyline points="1010.5,603.4 1034.3,650.0" fill="none" stroke="#999999" stroke-width="1.05" stroke-linejoin="round"/>
</g><g clip-path="url(#cT11)"><polyline points="1050.0,555.8 1065.8,549.5 1091.2,540.0" fill="none" stroke="#999999" stroke-width="1.05" stroke-linejoin="round"/>
<polyline points="1107.1,540.0 1108.6,549.5 1105.5,565.4 1118.1,590.7 1129.2,606.6 1130.8,622.4 1145.1,635.1 1151.4,650.0" fill="none" stroke="#999999" stroke-width="1.05" stroke-linejoin="round"/>
<polyline points="1154.6,549.5 1157.8,559.0 1156.2,581.2 1160.9,592.3 1173.6,611.3 1184.7,628.7 1199.0,650.0" fill="none" stroke="#999999" stroke-width="1.05" stroke-linejoin="round"/>
<polyline points="1183.1,540.0 1202.1,547.9 1221.2,565.4 1232.3,579.6 1240.2,590.7 1250.0,606.6" fill="none" stroke="#999999" stroke-width="1.05" stroke-linejoin="round"/>
<polyline points="1205.3,586.0 1216.4,605.0 1224.3,617.7 1240.2,625.6 1243.3,635.1" fill="none" stroke="#999999" stroke-width="1.05" stroke-linejoin="round"/>
<polyline points="1232.3,540.0 1233.8,563.8 1237.0,587.5 1250.0,600.2" fill="none" stroke="#999999" stroke-width="1.05" stroke-linejoin="round"/>
<polyline points="1050.0,643.0 1070.6,635.9 1097.5,641.4 1129.2,647.8" fill="none" stroke="#999999" stroke-width="1.05" stroke-linejoin="round"/>
</g><g clip-path="url(#cT12)"><polyline points="1188.0,540.0 1203.8,549.5 1219.7,565.4 1235.5,584.4 1251.4,600.2 1259.3,611.3 1275.2,628.7 1279.9,650.0" fill="none" stroke="#999999" stroke-width="1.05" stroke-linejoin="round"/>
<polyline points="1281.5,540.0 1289.4,555.8 1294.2,571.7 1295.8,595.5 1295.8,611.3 1298.9,622.4" fill="none" stroke="#999999" stroke-width="1.05" stroke-linejoin="round"/>
<polyline points="1314.8,540.0 1305.3,555.8 1302.1,571.7 1298.9,595.5" fill="none" stroke="#999999" stroke-width="1.05" stroke-linejoin="round"/>
<polyline points="1351.2,540.0 1338.6,559.0 1325.9,578.0 1333.8,592.3 1333.8,619.2 1322.7,627.2 1298.9,635.1 1267.2,641.4 1251.4,650.0" fill="none" stroke="#999999" stroke-width="1.05" stroke-linejoin="round"/>
<polyline points="1354.4,540.0 1370.3,549.5 1378.2,562.2 1378.2,579.6 1388.0,590.7" fill="none" stroke="#999999" stroke-width="1.05" stroke-linejoin="round"/>
<polyline points="1203.8,586.0 1219.7,606.6 1232.4,627.2 1240.3,650.0" fill="none" stroke="#999999" stroke-width="1.05" stroke-linejoin="round"/>
<polyline points="1188.0,628.7 1197.5,635.1 1200.7,650.0" fill="none" stroke="#999999" stroke-width="1.05" stroke-linejoin="round"/>
<polyline points="1267.2,641.4 1276.7,628.7 1286.3,635.1 1314.8,628.7 1338.6,616.1 1362.3,619.2 1388.0,612.9" fill="none" stroke="#999999" stroke-width="1.05" stroke-linejoin="round"/>
<polyline points="1235.5,586.0 1243.5,603.4 1248.2,611.3" fill="none" stroke="#999999" stroke-width="1.05" stroke-linejoin="round"/>
</g><g clip-path="url(#cT9)"><polyline points="1305.3,442.0 1303.7,473.7 1314.8,483.2 1327.5,508.6 1338.6,530.7 1354.4,552.0" fill="none" stroke="#999999" stroke-width="1.05" stroke-linejoin="round"/>
<polyline points="1327.5,508.6 1318.0,530.7 1308.4,552.0" fill="none" stroke="#999999" stroke-width="1.05" stroke-linejoin="round"/>
<polyline points="1338.6,442.0 1346.5,446.8 1362.3,457.8 1378.2,470.5 1388.0,481.6" fill="none" stroke="#999999" stroke-width="1.05" stroke-linejoin="round"/>
<polyline points="1327.5,502.2 1346.5,494.3 1356.0,497.5 1388.0,505.4" fill="none" stroke="#999999" stroke-width="1.05" stroke-linejoin="round"/>
<polyline points="1191.2,464.2 1211.8,470.5 1235.5,489.5 1251.4,502.2 1235.5,508.6 1203.8,508.6 1188.0,511.7" fill="none" stroke="#999999" stroke-width="1.05" stroke-linejoin="round"/>
<polyline points="1343.3,552.0 1362.3,533.9 1388.0,518.1" fill="none" stroke="#999999" stroke-width="1.05" stroke-linejoin="round"/>
<polyline points="1276.7,533.9 1286.3,552.0" fill="none" stroke="#999999" stroke-width="1.05" stroke-linejoin="round"/>
<polyline points="1188.0,543.4 1200.7,552.0" fill="none" stroke="#999999" stroke-width="1.05" stroke-linejoin="round"/>
</g><g clip-path="url(#cT5)"><polyline points="1060.0,338.6 1081.6,340.1 1103.2,341.5 1120.5,345.8 1137.8,350.2 1160.8,351.6 1180.0,353.0" fill="none" stroke="#999999" stroke-width="1.05" stroke-linejoin="round"/>
<polyline points="1137.8,350.2 1146.4,366.0 1149.3,380.4 1153.6,390.5" fill="none" stroke="#999999" stroke-width="1.05" stroke-linejoin="round"/>
</g><g clip-path="url(#cT1)"><polyline points="974.0,222.0 962.9,229.9 961.4,253.7 959.8,266.4 962.9,277.5 962.9,293.3 964.5,310.7 959.8,317.1 955.0,332.0" fill="none" stroke="#ea98ac" stroke-width="1.3" stroke-linejoin="round"/>
<polyline points="920.1,285.4 918.6,298.1 913.8,317.1 909.1,332.0" fill="none" stroke="#ea98ac" stroke-width="1.3" stroke-linejoin="round"/>
<polyline points="1031.1,222.0 1035.8,231.5 1039.0,241.0 1052.0,245.8" fill="none" stroke="#ea98ac" stroke-width="1.3" stroke-linejoin="round"/>
</g><g clip-path="url(#cT2)"><polyline points="1097.5,222.0 1091.2,228.3 1086.5,241.0 1081.7,252.1 1084.9,263.2 1088.0,282.2 1089.6,298.1 1097.5,313.9 1103.9,332.0" fill="none" stroke="#ea98ac" stroke-width="1.3" stroke-linejoin="round"/>
<polyline points="1089.6,298.1 1073.8,309.2 1062.7,323.4 1050.0,332.0" fill="none" stroke="#ea98ac" stroke-width="1.3" stroke-linejoin="round"/>
<polyline points="1116.6,222.0 1124.5,234.7 1132.4,242.6 1135.6,250.5 1145.1,264.8 1154.6,269.5 1160.9,279.1 1164.1,291.7 1162.5,304.4 1164.1,317.1 1160.9,332.0" fill="none" stroke="#ea98ac" stroke-width="1.3" stroke-linejoin="round"/>
<polyline points="1164.1,296.5 1176.8,301.2 1200.6,294.9 1208.5,293.3 1224.3,290.1 1250.0,288.6" fill="none" stroke="#ea98ac" stroke-width="1.3" stroke-linejoin="round"/>
<polyline points="1222.7,222.0 1218.0,245.8 1208.5,260.0 1205.3,272.7 1208.5,288.6 1203.7,310.7 1200.6,332.0" fill="none" stroke="#ea98ac" stroke-width="1.3" stroke-linejoin="round"/>
</g><g clip-path="url(#cT3)"><polyline points="1222.1,222.0 1218.1,242.6 1207.0,264.8 1205.4,277.5 1208.6,290.1 1205.4,307.6 1199.1,332.0" fill="none" stroke="#ea98ac" stroke-width="1.3" stroke-linejoin="round"/>
<polyline points="1188.0,302.8 1207.0,293.3 1235.5,290.1 1260.9,287.0 1283.1,290.1 1295.8,286.2 1311.6,289.4" fill="none" stroke="#ea98ac" stroke-width="1.3" stroke-linejoin="round"/>
<polyline points="1302.1,222.0 1306.9,234.7 1311.6,253.7" fill="none" stroke="#ea98ac" stroke-width="1.3" stroke-linejoin="round"/>
<polyline points="1343.3,222.0 1340.1,242.6 1330.6,266.4 1327.5,285.4 1329.0,304.4 1332.2,310.7 1330.6,332.0" fill="none" stroke="#ea98ac" stroke-width="1.3" stroke-linejoin="round"/>
<polyline points="1188.0,318.7 1211.8,320.3 1229.2,317.1" fill="none" stroke="#ea98ac" stroke-width="1.3" stroke-linejoin="round"/>
</g><g clip-path="url(#cT4)"><polyline points="953.4,332.0 950.3,344.7 947.1,351.0 931.2,362.1 918.6,360.5 909.1,352.6 907.5,332.0" fill="none" stroke="#ea98ac" stroke-width="1.3" stroke-linejoin="round"/>
<polyline points="896.4,363.7 909.1,373.2 931.2,374.8 940.7,379.5 950.3,389.1 959.8,398.6 978.8,406.5 994.6,420.7 997.8,442.0" fill="none" stroke="#ea98ac" stroke-width="1.3" stroke-linejoin="round"/>
<polyline points="912.2,384.3 912.2,403.3 918.6,400.1 940.7,404.9 950.3,406.5" fill="none" stroke="#ea98ac" stroke-width="1.3" stroke-linejoin="round"/>
<polyline points="852.0,442.0 883.7,430.3 899.5,420.7 912.2,403.3" fill="none" stroke="#ea98ac" stroke-width="1.3" stroke-linejoin="round"/>
<polyline points="1052.0,332.0 1048.5,351.0 1034.3,368.5 1010.5,382.7 988.3,393.8 972.4,398.6" fill="none" stroke="#ea98ac" stroke-width="1.3" stroke-linejoin="round"/>
<polyline points="1052.0,398.6 1034.3,404.9 1018.4,406.5 1004.1,411.2 994.6,420.7" fill="none" stroke="#ea98ac" stroke-width="1.3" stroke-linejoin="round"/>
</g><g clip-path="url(#cT6)"><polyline points="1330.6,332.0 1333.8,347.8 1341.7,363.7 1344.9,373.2 1341.7,395.4 1337.0,411.2 1327.5,423.9 1319.5,442.0" fill="none" stroke="#ea98ac" stroke-width="1.3" stroke-linejoin="round"/>
<polyline points="1188.0,423.9 1219.7,414.4 1243.5,406.5 1259.3,411.2 1275.2,408.1 1291.0,406.5 1311.6,398.6 1330.6,395.4 1362.3,395.4 1375.0,400.1 1388.0,409.7" fill="none" stroke="#ea98ac" stroke-width="1.3" stroke-linejoin="round"/>
<polyline points="1232.4,384.3 1241.9,387.5 1257.7,417.6" fill="none" stroke="#ea98ac" stroke-width="1.3" stroke-linejoin="round"/>
<polyline points="1375.0,400.1 1368.7,419.2 1367.1,442.0" fill="none" stroke="#ea98ac" stroke-width="1.3" stroke-linejoin="round"/>
</g><g clip-path="url(#cT7)"><polyline points="852.0,459.4 875.8,453.1 886.9,442.0" fill="none" stroke="#ea98ac" stroke-width="1.3" stroke-linejoin="round"/>
<polyline points="852.0,473.7 871.0,470.5 883.7,478.5 896.4,481.6 915.4,470.5 940.7,470.5 969.3,470.5 997.8,475.3 1052.0,480.0" fill="none" stroke="#ea98ac" stroke-width="1.3" stroke-linejoin="round"/>
<polyline points="899.5,489.5 890.0,502.2 875.8,505.4 864.7,508.6 852.0,505.4" fill="none" stroke="#ea98ac" stroke-width="1.3" stroke-linejoin="round"/>
<polyline points="852.0,530.7 871.0,522.8 880.5,521.2 891.6,537.1 898.0,552.0" fill="none" stroke="#ea98ac" stroke-width="1.3" stroke-linejoin="round"/>
<polyline points="969.3,470.5 969.3,483.2 975.6,499.1 986.7,508.6 994.6,524.4 1001.0,537.1 1002.6,552.0" fill="none" stroke="#ea98ac" stroke-width="1.3" stroke-linejoin="round"/>
<polyline points="975.6,499.1 959.8,505.4 953.4,518.1 948.7,537.1 945.5,552.0" fill="none" stroke="#ea98ac" stroke-width="1.3" stroke-linejoin="round"/>
<polyline points="872.6,521.2 874.2,537.1 864.7,552.0" fill="none" stroke="#ea98ac" stroke-width="1.3" stroke-linejoin="round"/>
<polyline points="986.7,445.2 983.5,461.0" fill="none" stroke="#ea98ac" stroke-width="1.3" stroke-linejoin="round"/>
</g><g clip-path="url(#cT8)"><polyline points="1050.0,476.9 1065.8,483.2 1081.7,484.8 1097.5,484.8 1116.6,480.0 1119.7,465.8 1129.2,451.5 1132.4,442.0" fill="none" stroke="#ea98ac" stroke-width="1.3" stroke-linejoin="round"/>
<polyline points="1053.2,442.0 1059.5,467.4 1065.8,483.2" fill="none" stroke="#ea98ac" stroke-width="1.3" stroke-linejoin="round"/>
<polyline points="1097.5,484.8 1091.2,494.3 1089.6,505.4 1081.7,521.2 1072.2,537.1 1065.8,552.0" fill="none" stroke="#ea98ac" stroke-width="1.3" stroke-linejoin="round"/>
<polyline points="1107.1,508.6 1105.5,530.7 1110.2,552.0" fill="none" stroke="#ea98ac" stroke-width="1.3" stroke-linejoin="round"/>
<polyline points="1145.1,511.7 1160.9,518.1 1176.8,532.3 1208.5,545.0 1224.3,552.0" fill="none" stroke="#ea98ac" stroke-width="1.3" stroke-linejoin="round"/>
<polyline points="1176.8,507.0 1192.6,505.4 1205.3,507.0" fill="none" stroke="#ea98ac" stroke-width="1.3" stroke-linejoin="round"/>
<polyline points="1078.5,537.1 1089.6,543.4 1097.5,552.0" fill="none" stroke="#ea98ac" stroke-width="1.3" stroke-linejoin="round"/>
</g><g clip-path="url(#cT10)"><polyline points="898.0,554.3 894.8,571.7 885.3,592.3 864.7,619.2 852.0,628.7" fill="none" stroke="#ea98ac" stroke-width="1.3" stroke-linejoin="round"/>
<polyline points="852.0,587.5 875.8,592.3 899.5,581.2 923.3,579.6 962.9,576.5 1010.5,571.7 1052.0,563.8" fill="none" stroke="#ea98ac" stroke-width="1.3" stroke-linejoin="round"/>
<polyline points="947.1,540.0 940.7,571.7 937.6,587.5 928.1,616.1" fill="none" stroke="#ea98ac" stroke-width="1.3" stroke-linejoin="round"/>
<polyline points="1002.6,555.8 1018.4,574.9 1034.3,600.2 1042.2,619.2 1034.3,635.1" fill="none" stroke="#ea98ac" stroke-width="1.3" stroke-linejoin="round"/>
</g><g clip-path="url(#cT11)"><polyline points="1073.8,540.0 1070.6,549.5 1056.3,565.4 1059.5,579.6 1057.9,587.5 1050.0,593.9" fill="none" stroke="#ea98ac" stroke-width="1.3" stroke-linejoin="round"/>
<polyline points="1091.2,540.0 1100.7,552.7 1103.9,566.9 1113.4,581.2 1121.3,597.1 1127.7,609.7 1129.2,622.4 1138.7,638.3 1145.1,650.0" fill="none" stroke="#ea98ac" stroke-width="1.3" stroke-linejoin="round"/>
<polyline points="1113.4,584.4 1132.4,581.2 1151.4,582.8 1173.6,589.1 1192.6,603.4 1216.4,614.5 1227.5,619.2 1229.1,628.7 1230.7,638.3" fill="none" stroke="#ea98ac" stroke-width="1.3" stroke-linejoin="round"/>
<polyline points="1195.8,540.0 1211.6,547.9 1218.0,555.8 1232.3,563.8 1240.2,573.3 1250.0,581.2" fill="none" stroke="#ea98ac" stroke-width="1.3" stroke-linejoin="round"/>
<polyline points="1050.0,641.4 1070.6,635.1" fill="none" stroke="#ea98ac" stroke-width="1.3" stroke-linejoin="round"/>
<polyline points="1224.3,631.9 1240.2,631.9 1250.0,635.1" fill="none" stroke="#ea98ac" stroke-width="1.3" stroke-linejoin="round"/>
</g><g clip-path="url(#cT12)"><polyline points="1197.5,540.0 1219.7,552.7 1232.4,563.8 1238.7,574.9 1251.4,584.4 1259.3,598.6 1267.2,616.1 1276.7,619.2 1286.3,614.5 1289.4,600.2 1286.3,574.9 1292.6,559.0 1298.9,540.0" fill="none" stroke="#ea98ac" stroke-width="1.3" stroke-linejoin="round"/>
<polyline points="1188.0,600.2 1203.8,609.7 1219.7,616.1 1227.6,628.7 1230.8,643.0" fill="none" stroke="#ea98ac" stroke-width="1.3" stroke-linejoin="round"/>
<polyline points="1340.1,540.0 1330.6,549.5 1325.9,565.4 1324.3,576.5 1308.4,582.8 1305.3,592.3 1302.1,608.1" fill="none" stroke="#ea98ac" stroke-width="1.3" stroke-linejoin="round"/>
<polyline points="1324.3,576.5 1327.5,587.5 1333.8,606.6 1330.6,616.1" fill="none" stroke="#ea98ac" stroke-width="1.3" stroke-linejoin="round"/>
<polyline points="1283.1,619.2 1306.9,611.3 1330.6,608.1 1362.3,606.6 1388.0,609.7" fill="none" stroke="#ea98ac" stroke-width="1.3" stroke-linejoin="round"/>
<polyline points="1229.2,631.9 1251.4,635.1 1275.2,631.9 1298.9,633.5 1330.6,628.7 1362.3,635.1 1388.0,631.9" fill="none" stroke="#ea98ac" stroke-width="1.3" stroke-linejoin="round"/>
<polyline points="1337.0,622.4 1346.5,635.1 1354.4,643.0" fill="none" stroke="#ea98ac" stroke-width="1.3" stroke-linejoin="round"/>
<polyline points="1362.3,612.9 1370.3,622.4 1378.2,635.1" fill="none" stroke="#ea98ac" stroke-width="1.3" stroke-linejoin="round"/>
</g><g clip-path="url(#cT9)"><polyline points="1318.0,442.0 1313.2,465.8 1308.4,497.5 1303.7,521.2 1298.9,540.3 1295.8,552.0" fill="none" stroke="#ea98ac" stroke-width="1.3" stroke-linejoin="round"/>
<polyline points="1188.0,505.4 1203.8,507.0" fill="none" stroke="#ea98ac" stroke-width="1.3" stroke-linejoin="round"/>
<polyline points="1330.6,552.0 1346.5,533.9 1370.3,518.1 1388.0,518.1" fill="none" stroke="#ea98ac" stroke-width="1.3" stroke-linejoin="round"/>
<polyline points="1188.0,537.1 1203.8,543.4 1216.5,552.0" fill="none" stroke="#ea98ac" stroke-width="1.3" stroke-linejoin="round"/>
<polyline points="1287.8,530.7 1311.6,532.3" fill="none" stroke="#ea98ac" stroke-width="1.3" stroke-linejoin="round"/>
<polyline points="1343.3,442.0 1359.2,448.3 1365.5,457.8 1375.0,473.7 1388.0,489.5" fill="none" stroke="#ea98ac" stroke-width="1.3" stroke-linejoin="round"/>
</g><g clip-path="url(#cT5)"><polyline points="1160.8,330.0 1158.0,338.6 1146.4,344.4 1137.8,347.3" fill="none" stroke="#ea98ac" stroke-width="1.3" stroke-linejoin="round"/>
<polyline points="1132.0,373.2 1130.6,387.6 1129.1,416.4" fill="none" stroke="#ea98ac" stroke-width="1.3" stroke-linejoin="round"/>
<polyline points="1060.0,399.1 1071.5,396.3 1103.2,380.4 1120.5,367.5" fill="none" stroke="#ea98ac" stroke-width="1.3" stroke-linejoin="round"/>
</g><polyline points="1332.2,222.0 1314.8,251.9 1311.6,269.3 1310.0,310.5 1305.3,315.2 1289.5,312.1 1276.8,308.9 1264.1,309.7 1256.2,310.5 1251.4,316.8 1254.6,332.0 1259.3,335.2 1246.6,338.3 1248.2,355.8 1259.3,362.1 1275.2,365.3 1292.6,370.0 1297.4,362.1 1302.1,371.6 1311.6,381.1 1311.6,395.4 1306.9,403.3 1306.9,420.7 1310.0,427.1 1302.1,430.3 1276.0,446.0 1270.0,470.0 1272.0,497.0 1267.0,514.0 1250.0,518.0 1224.3,524.4 1208.5,527.6 1192.6,533.9 1176.8,527.6 1157.8,537.0 1145.1,527.6 1126.0,536.0 1119.7,540.0 1126.1,552.7 1121.3,563.8 1134.0,570.1 1134.0,581.2 1148.3,587.5 1145.1,600.2 1153.0,612.9 1164.1,625.6 1167.3,650.0" fill="none" stroke="#a58bb1" stroke-width="2.2" stroke-linejoin="round"/>
<path d="M852 641.4 Q858 636 864.7 635.1 T879 636.7 Q882 642 883.7 650 M898 650 Q900 640 904.3 638.3 T918.6 628.7 Q925 627 928.1 631.9 T931.2 643 Q936 648 943.9 644.6 T963 633.5 Q969 633 972.4 641.4 T975.6 650" fill="none" stroke="#a58bb1" stroke-width="2.2"/>
<text x="1001.0" y="268.3" font-family="Liberation Sans" font-size="10.5" fill="#5f89b2" font-style="italic" stroke="#fff" stroke-width="2" stroke-opacity="0.7" paint-order="stroke" textLength="41.6" lengthAdjust="spacingAndGlyphs">Ijsselmeer</text>
<text x="923.0" y="299.7" font-family="Liberation Sans" font-size="11.5" fill="#8b6f93" font-style="italic" stroke="#fff" stroke-width="2" stroke-opacity="0.7" paint-order="stroke" textLength="67.8" lengthAdjust="spacingAndGlyphs">Noord-Holland</text>
<text x="896.7" y="317.6" font-family="Liberation Sans" font-size="11" fill="#3b3b3b" stroke="#fff" stroke-width="2" stroke-opacity="0.7" paint-order="stroke" textLength="36.1" lengthAdjust="spacingAndGlyphs">Alkmaar</text>
<text x="1016.4" y="341.3" font-family="Liberation Sans" font-size="11.5" fill="#8b6f93" font-style="italic" stroke="#fff" stroke-width="2" stroke-opacity="0.7" paint-order="stroke" textLength="41.6" lengthAdjust="spacingAndGlyphs">Flevoland</text>
<text x="906.0" y="392.2" font-family="Liberation Sans" font-size="15" fill="#3b3b3b" stroke="#fff" stroke-width="2" stroke-opacity="0.7" paint-order="stroke" textLength="66.3" lengthAdjust="spacingAndGlyphs">Amsterdam</text>
<text x="1229.5" y="239.9" font-family="Liberation Sans" font-size="11" fill="#8b6f93" font-style="italic" stroke="#fff" stroke-width="2" stroke-opacity="0.7" paint-order="stroke" textLength="35.5" lengthAdjust="spacingAndGlyphs">Drenthe</text>
<text x="1265.0" y="273.8" font-family="Liberation Sans" font-size="11" fill="#3b3b3b" stroke="#fff" stroke-width="2" stroke-opacity="0.7" paint-order="stroke" textLength="33.3" lengthAdjust="spacingAndGlyphs">Emmen</text>
<text x="1130.8" y="352.4" font-family="Liberation Sans" font-size="11" fill="#3b3b3b" stroke="#fff" stroke-width="2" stroke-opacity="0.7" paint-order="stroke" textLength="28.7" lengthAdjust="spacingAndGlyphs">Zwolle</text>
<text x="1169.0" y="359.0" font-family="Liberation Sans" font-size="11" fill="#8b6f93" font-style="italic" stroke="#fff" stroke-width="2" stroke-opacity="0.7" paint-order="stroke" textLength="46.6" lengthAdjust="spacingAndGlyphs">Overijssel</text>
<text x="855.0" y="450.8" font-family="Liberation Sans" font-size="11" fill="#3b3b3b" stroke="#fff" stroke-width="2" stroke-opacity="0.7" paint-order="stroke" textLength="28.8" lengthAdjust="spacingAndGlyphs">Leiden</text>
<text x="852.0" y="474.5" font-family="Liberation Sans" font-size="15" fill="#3b3b3b" stroke="#fff" stroke-width="2" stroke-opacity="0.7" paint-order="stroke" textLength="15.4" lengthAdjust="spacingAndGlyphs">aag</text>
<text x="966.0" y="473.0" font-family="Liberation Sans" font-size="11.5" fill="#8b6f93" font-style="italic" stroke="#fff" stroke-width="2" stroke-opacity="0.7" paint-order="stroke" textLength="33.4" lengthAdjust="spacingAndGlyphs">Utrecht</text>
<text x="852.0" y="497.7" font-family="Liberation Sans" font-size="11.5" fill="#8b6f93" font-style="italic" stroke="#fff" stroke-width="2" stroke-opacity="0.7" paint-order="stroke" textLength="30.8" lengthAdjust="spacingAndGlyphs">Holland</text>
<text x="852.0" y="517.7" font-family="Liberation Sans" font-size="15" fill="#3b3b3b" stroke="#fff" stroke-width="2" stroke-opacity="0.7" paint-order="stroke" textLength="44.0" lengthAdjust="spacingAndGlyphs">tterdam</text>
<text x="880.7" y="552.0" font-family="Liberation Sans" font-size="11" fill="#3b3b3b" stroke="#fff" stroke-width="2" stroke-opacity="0.7" paint-order="stroke" textLength="44.3" lengthAdjust="spacingAndGlyphs">Dordrecht</text>
<text x="970.7" y="581.0" font-family="Liberation Sans" font-size="11" fill="#3b3b3b" stroke="#fff" stroke-width="2" stroke-opacity="0.7" paint-order="stroke" textLength="77.1" lengthAdjust="spacingAndGlyphs">'s-Hertogenbosch</text>
<text x="906.6" y="608.0" font-family="Liberation Sans" font-size="11" fill="#3b3b3b" stroke="#fff" stroke-width="2" stroke-opacity="0.7" paint-order="stroke" textLength="25.6" lengthAdjust="spacingAndGlyphs">Breda</text>
<text x="929.7" y="625.6" font-family="Liberation Sans" font-size="11.5" fill="#8b6f93" font-style="italic" stroke="#fff" stroke-width="2" stroke-opacity="0.7" paint-order="stroke" textLength="68.8" lengthAdjust="spacingAndGlyphs">Noord-Brabant</text>
<text x="1016.4" y="649.0" font-family="Liberation Sans" font-size="11" fill="#3b3b3b" stroke="#fff" stroke-width="2" stroke-opacity="0.7" paint-order="stroke" textLength="46.2" lengthAdjust="spacingAndGlyphs">Eindhoven</text>
<text x="1064.8" y="482.3" font-family="Liberation Sans" font-size="11" fill="#3b3b3b" stroke="#fff" stroke-width="2" stroke-opacity="0.7" paint-order="stroke" textLength="15.4" lengthAdjust="spacingAndGlyphs">Ede</text>
<text x="1084.8" y="538.7" font-family="Liberation Sans" font-size="11" fill="#3b3b3b" stroke="#fff" stroke-width="2" stroke-opacity="0.7" paint-order="stroke" textLength="43.2" lengthAdjust="spacingAndGlyphs">Nijmegen</text>
<text x="1108.0" y="436.0" font-family="Liberation Sans" font-size="11" fill="#3b3b3b" stroke="#fff" stroke-width="2" stroke-opacity="0.7" paint-order="stroke" textLength="42.0" lengthAdjust="spacingAndGlyphs">Apeldoorn</text>
<text x="1013.0" y="442.0" font-family="Liberation Sans" font-size="11" fill="#3b3b3b" stroke="#fff" stroke-width="2" stroke-opacity="0.7" paint-order="stroke" textLength="47.0" lengthAdjust="spacingAndGlyphs">Amersfoort</text>
<text x="1120.0" y="458.0" font-family="Liberation Sans" font-size="11.5" fill="#8b6f93" font-style="italic" stroke="#fff" stroke-width="2" stroke-opacity="0.7" paint-order="stroke" textLength="50.0" lengthAdjust="spacingAndGlyphs">Gelderland</text>
<text x="1262.0" y="431.0" font-family="Liberation Sans" font-size="11" fill="#3b3b3b" stroke="#fff" stroke-width="2" stroke-opacity="0.7" paint-order="stroke" textLength="43.0" lengthAdjust="spacingAndGlyphs">Enschede</text>
<text x="1243.4" y="560.9" font-family="Liberation Sans" font-size="10.5" fill="#2f9a40" font-style="italic" stroke="#fff" stroke-width="2" stroke-opacity="0.7" paint-order="stroke" textLength="42.2" lengthAdjust="spacingAndGlyphs">Naturpark</text>
<text x="1241.8" y="572.6" font-family="Liberation Sans" font-size="10.5" fill="#2f9a40" font-style="italic" stroke="#fff" stroke-width="2" stroke-opacity="0.7" paint-order="stroke" textLength="44.7" lengthAdjust="spacingAndGlyphs">Hohe Mark</text>
<text x="1229.5" y="583.4" font-family="Liberation Sans" font-size="10.5" fill="#2f9a40" font-style="italic" stroke="#fff" stroke-width="2" stroke-opacity="0.7" paint-order="stroke" textLength="74.0" lengthAdjust="spacingAndGlyphs">- Westmünsterland</text>
<text x="1298.9" y="601.6" font-family="Liberation Sans" font-size="11" fill="#3b3b3b" stroke="#fff" stroke-width="2" stroke-opacity="0.7" paint-order="stroke" textLength="69.4" lengthAdjust="spacingAndGlyphs">Recklinghausen</text>
<text x="1271.1" y="626.6" font-family="Liberation Sans" font-size="11" fill="#3b3b3b" stroke="#fff" stroke-width="2" stroke-opacity="0.7" paint-order="stroke" textLength="33.0" lengthAdjust="spacingAndGlyphs">Bottrop</text>
<text x="1223.3" y="645.7" font-family="Liberation Sans" font-size="11" fill="#3b3b3b" stroke="#fff" stroke-width="2" stroke-opacity="0.7" paint-order="stroke" textLength="26.8" lengthAdjust="spacingAndGlyphs">Moers</text>
<text x="1286.5" y="644.4" font-family="Liberation Sans" font-size="15" fill="#3b3b3b" stroke="#fff" stroke-width="2" stroke-opacity="0.7" paint-order="stroke" textLength="32.4" lengthAdjust="spacingAndGlyphs">Essen</text>
<text x="1349.8" y="630.9" font-family="Liberation Sans" font-size="15" fill="#3b3b3b" stroke="#fff" stroke-width="2" stroke-opacity="0.7" paint-order="stroke" textLength="42.2" lengthAdjust="spacingAndGlyphs">Dortm</text>
<text x="995.0" y="395.0" font-family="Liberation Sans" font-size="11" fill="#3b3b3b" stroke="#fff" stroke-width="2" stroke-opacity="0.7" paint-order="stroke" textLength="30.0" lengthAdjust="spacingAndGlyphs">Almere</text>
<circle cx="981" cy="352.3" r="8.1" fill="#95b7d9" stroke="#26292d" stroke-width="1.9"/>
<circle cx="1002.6" cy="345.8" r="8.1" fill="#95b7d9" stroke="#26292d" stroke-width="1.9"/>
<circle cx="1018.2" cy="355.6" r="9.4" fill="#95b7d9" stroke="#26292d" stroke-width="1.9"/>
<text x="1018.2" y="358.7" font-family="Liberation Sans" font-size="8.6" font-weight="bold" fill="#3a3a3a" stroke="#fff" stroke-width="2.4" stroke-linejoin="round" paint-order="stroke" text-anchor="middle">6</text>
<circle cx="1037.9" cy="354.2" r="8.1" fill="#95b7d9" stroke="#26292d" stroke-width="1.9"/>
<text x="1037.9" y="357.3" font-family="Liberation Sans" font-size="8.6" font-weight="bold" fill="#3a3a3a" stroke="#fff" stroke-width="2.4" stroke-linejoin="round" paint-order="stroke" text-anchor="middle">2</text>
<circle cx="1058" cy="373" r="9.4" fill="#95b7d9" stroke="#26292d" stroke-width="1.9"/>
<text x="1058" y="376.1" font-family="Liberation Sans" font-size="8.6" font-weight="bold" fill="#3a3a3a" stroke="#fff" stroke-width="2.4" stroke-linejoin="round" paint-order="stroke" text-anchor="middle">5</text>
<circle cx="986.3" cy="376.4" r="8.1" fill="#95b7d9" stroke="#26292d" stroke-width="1.9"/>
<text x="986.3" y="379.5" font-family="Liberation Sans" font-size="8.6" font-weight="bold" fill="#3a3a3a" stroke="#fff" stroke-width="2.4" stroke-linejoin="round" paint-order="stroke" text-anchor="middle">5</text>
<circle cx="1041.8" cy="387.3" r="8.1" fill="#79c0b2" stroke="#2f3338" stroke-width="1.9"/>
<text x="1041.8" y="390.4" font-family="Liberation Sans" font-size="8.6" font-weight="bold" fill="#3a3a3a" stroke="#fff" stroke-width="2.4" stroke-linejoin="round" paint-order="stroke" text-anchor="middle">2</text>
<circle cx="979.6" cy="394.1" r="8.1" fill="#95b7d9" stroke="#26292d" stroke-width="1.9"/>
<text x="979.6" y="397.2" font-family="Liberation Sans" font-size="8.6" font-weight="bold" fill="#3a3a3a" stroke="#fff" stroke-width="2.4" stroke-linejoin="round" paint-order="stroke" text-anchor="middle">3</text>
<circle cx="1014.4" cy="390.5" r="8.1" fill="#95b7d9" stroke="#26292d" stroke-width="1.9"/>
<text x="1014.4" y="393.6" font-family="Liberation Sans" font-size="8.6" font-weight="bold" fill="#3a3a3a" stroke="#fff" stroke-width="2.4" stroke-linejoin="round" paint-order="stroke" text-anchor="middle">6</text>
<circle cx="962.8" cy="418.3" r="8.1" fill="#95b7d9" stroke="#26292d" stroke-width="1.9"/>
<circle cx="1004.9" cy="415.7" r="8.1" fill="#95b7d9" stroke="#26292d" stroke-width="1.9"/>
<text x="1004.9" y="418.8" font-family="Liberation Sans" font-size="8.6" font-weight="bold" fill="#3a3a3a" stroke="#fff" stroke-width="2.4" stroke-linejoin="round" paint-order="stroke" text-anchor="middle">2</text>
<circle cx="1021.8" cy="413.6" r="8.1" fill="#95b7d9" stroke="#26292d" stroke-width="1.9"/>
<circle cx="1052" cy="408.4" r="8.1" fill="#95b7d9" stroke="#26292d" stroke-width="1.9"/>
<text x="1052" y="411.5" font-family="Liberation Sans" font-size="8.6" font-weight="bold" fill="#3a3a3a" stroke="#fff" stroke-width="2.4" stroke-linejoin="round" paint-order="stroke" text-anchor="middle">3</text>
<circle cx="1040.3" cy="424" r="8.1" fill="#95b7d9" stroke="#26292d" stroke-width="1.9"/>
<circle cx="1085.2" cy="353" r="8.1" fill="#95b7d9" stroke="#26292d" stroke-width="1.9"/>
<text x="1085.2" y="356.1" font-family="Liberation Sans" font-size="8.6" font-weight="bold" fill="#3a3a3a" stroke="#fff" stroke-width="2.4" stroke-linejoin="round" paint-order="stroke" text-anchor="middle">3</text>
<circle cx="1104.9" cy="348.7" r="8.1" fill="#95b7d9" stroke="#26292d" stroke-width="1.9"/>
<circle cx="1133.5" cy="364.6" r="8.1" fill="#95b7d9" stroke="#26292d" stroke-width="1.9"/>
<text x="1133.5" y="367.7" font-family="Liberation Sans" font-size="8.6" font-weight="bold" fill="#3a3a3a" stroke="#fff" stroke-width="2.4" stroke-linejoin="round" paint-order="stroke" text-anchor="middle">5</text>
<circle cx="1167.3" cy="364.6" r="8.1" fill="#95b7d9" stroke="#26292d" stroke-width="1.9"/>
<text x="1167.3" y="367.7" font-family="Liberation Sans" font-size="8.6" font-weight="bold" fill="#3a3a3a" stroke="#fff" stroke-width="2.4" stroke-linejoin="round" paint-order="stroke" text-anchor="middle">2</text>
<circle cx="1092.8" cy="374.7" r="8.1" fill="#95b7d9" stroke="#26292d" stroke-width="1.9"/>
<circle cx="1110.7" cy="369.6" r="8.1" fill="#95b7d9" stroke="#26292d" stroke-width="1.9"/>
<circle cx="1080.2" cy="390.2" r="8.1" fill="#95b7d9" stroke="#26292d" stroke-width="1.9"/>
<circle cx="1098.2" cy="392" r="8.1" fill="#95b7d9" stroke="#26292d" stroke-width="1.9"/>
<circle cx="1114" cy="394.5" r="8.1" fill="#95b7d9" stroke="#26292d" stroke-width="1.9"/>
<text x="1114" y="397.6" font-family="Liberation Sans" font-size="8.6" font-weight="bold" fill="#3a3a3a" stroke="#fff" stroke-width="2.4" stroke-linejoin="round" paint-order="stroke" text-anchor="middle">5</text>
<circle cx="1130.9" cy="388.8" r="8.1" fill="#95b7d9" stroke="#26292d" stroke-width="1.9"/>
<text x="1130.9" y="391.9" font-family="Liberation Sans" font-size="8.6" font-weight="bold" fill="#3a3a3a" stroke="#fff" stroke-width="2.4" stroke-linejoin="round" paint-order="stroke" text-anchor="middle">2</text>
<circle cx="1150" cy="390.5" r="8.1" fill="#95b7d9" stroke="#26292d" stroke-width="1.9"/>
<text x="1150" y="393.6" font-family="Liberation Sans" font-size="8.6" font-weight="bold" fill="#3a3a3a" stroke="#fff" stroke-width="2.4" stroke-linejoin="round" paint-order="stroke" text-anchor="middle">2</text>
<circle cx="1170.6" cy="408.5" r="9.4" fill="#95b7d9" stroke="#26292d" stroke-width="1.9"/>
<text x="1170.6" y="411.6" font-family="Liberation Sans" font-size="8.6" font-weight="bold" fill="#3a3a3a" stroke="#fff" stroke-width="2.4" stroke-linejoin="round" paint-order="stroke" text-anchor="middle">8</text>
<circle cx="1114.5" cy="411.8" r="8.1" fill="#95b7d9" stroke="#26292d" stroke-width="1.9"/>
<circle cx="1145.7" cy="415.7" r="8.1" fill="#95b7d9" stroke="#26292d" stroke-width="1.9"/>
<circle cx="1065" cy="413.8" r="8.1" fill="#95b7d9" stroke="#26292d" stroke-width="1.9"/>
<circle cx="1091.7" cy="427.5" r="8.1" fill="#95b7d9" stroke="#26292d" stroke-width="1.9"/>
<text x="1091.7" y="430.6" font-family="Liberation Sans" font-size="8.6" font-weight="bold" fill="#3a3a3a" stroke="#fff" stroke-width="2.4" stroke-linejoin="round" paint-order="stroke" text-anchor="middle">4</text>
<circle cx="1124" cy="426.5" r="8.1" fill="#95b7d9" stroke="#26292d" stroke-width="1.9"/>
<circle cx="980.4" cy="431.9" r="8.1" fill="#95b7d9" stroke="#26292d" stroke-width="1.9"/>
<text x="980.4" y="435.0" font-family="Liberation Sans" font-size="8.6" font-weight="bold" fill="#3a3a3a" stroke="#fff" stroke-width="2.4" stroke-linejoin="round" paint-order="stroke" text-anchor="middle">4</text>
<circle cx="964" cy="445" r="8.1" fill="#95b7d9" stroke="#26292d" stroke-width="1.9"/>
<text x="964" y="448.1" font-family="Liberation Sans" font-size="8.6" font-weight="bold" fill="#3a3a3a" stroke="#fff" stroke-width="2.4" stroke-linejoin="round" paint-order="stroke" text-anchor="middle">3</text>
<circle cx="977.9" cy="457.7" r="8.1" fill="#95b7d9" stroke="#26292d" stroke-width="1.9"/>
<text x="977.9" y="460.8" font-family="Liberation Sans" font-size="8.6" font-weight="bold" fill="#3a3a3a" stroke="#fff" stroke-width="2.4" stroke-linejoin="round" paint-order="stroke" text-anchor="middle">2</text>
<circle cx="1001.8" cy="453.5" r="8.1" fill="#95b7d9" stroke="#26292d" stroke-width="1.9"/>
<text x="1001.8" y="456.6" font-family="Liberation Sans" font-size="8.6" font-weight="bold" fill="#3a3a3a" stroke="#fff" stroke-width="2.4" stroke-linejoin="round" paint-order="stroke" text-anchor="middle">4</text>
<circle cx="1021.9" cy="453.5" r="8.1" fill="#95b7d9" stroke="#26292d" stroke-width="1.9"/>
<text x="1021.9" y="456.6" font-family="Liberation Sans" font-size="8.6" font-weight="bold" fill="#3a3a3a" stroke="#fff" stroke-width="2.4" stroke-linejoin="round" paint-order="stroke" text-anchor="middle">2</text>
<circle cx="1021.4" cy="432.6" r="8.1" fill="#95b7d9" stroke="#26292d" stroke-width="1.9"/>
<circle cx="1058" cy="433.9" r="8.1" fill="#95b7d9" stroke="#26292d" stroke-width="1.9"/>
<text x="1058" y="437.0" font-family="Liberation Sans" font-size="8.6" font-weight="bold" fill="#3a3a3a" stroke="#fff" stroke-width="2.4" stroke-linejoin="round" paint-order="stroke" text-anchor="middle">6</text>
<circle cx="1043.8" cy="448.8" r="8.1" fill="#95b7d9" stroke="#26292d" stroke-width="1.9"/>
<circle cx="1041.8" cy="467.6" r="8.1" fill="#95b7d9" stroke="#26292d" stroke-width="1.9"/>
<text x="1041.8" y="470.7" font-family="Liberation Sans" font-size="8.6" font-weight="bold" fill="#3a3a3a" stroke="#fff" stroke-width="2.4" stroke-linejoin="round" paint-order="stroke" text-anchor="middle">2</text>
<circle cx="1022" cy="474.5" r="9.4" fill="#95b7d9" stroke="#26292d" stroke-width="1.9"/>
<text x="1022" y="477.6" font-family="Liberation Sans" font-size="8.6" font-weight="bold" fill="#3a3a3a" stroke="#fff" stroke-width="2.4" stroke-linejoin="round" paint-order="stroke" text-anchor="middle">5</text>
<circle cx="1017.6" cy="487.8" r="8.1" fill="#95b7d9" stroke="#26292d" stroke-width="1.9"/>
<circle cx="1028.9" cy="491.8" r="8.1" fill="#95b7d9" stroke="#26292d" stroke-width="1.9"/>
<text x="1028.9" y="494.9" font-family="Liberation Sans" font-size="8.6" font-weight="bold" fill="#3a3a3a" stroke="#fff" stroke-width="2.4" stroke-linejoin="round" paint-order="stroke" text-anchor="middle">5</text>
<circle cx="982.7" cy="490.9" r="8.1" fill="#95b7d9" stroke="#26292d" stroke-width="1.9"/>
<text x="982.7" y="494.0" font-family="Liberation Sans" font-size="8.6" font-weight="bold" fill="#3a3a3a" stroke="#fff" stroke-width="2.4" stroke-linejoin="round" paint-order="stroke" text-anchor="middle">4</text>
<circle cx="1005.9" cy="506.1" r="8.1" fill="#95b7d9" stroke="#26292d" stroke-width="1.9"/>
<text x="1005.9" y="509.2" font-family="Liberation Sans" font-size="8.6" font-weight="bold" fill="#3a3a3a" stroke="#fff" stroke-width="2.4" stroke-linejoin="round" paint-order="stroke" text-anchor="middle">2</text>
<circle cx="991.3" cy="514.2" r="8.1" fill="#95b7d9" stroke="#26292d" stroke-width="1.9"/>
<text x="991.3" y="517.3" font-family="Liberation Sans" font-size="8.6" font-weight="bold" fill="#3a3a3a" stroke="#fff" stroke-width="2.4" stroke-linejoin="round" paint-order="stroke" text-anchor="middle">2</text>
<circle cx="965.4" cy="522.9" r="8.1" fill="#95b7d9" stroke="#26292d" stroke-width="1.9"/>
<circle cx="1047.9" cy="522" r="8.1" fill="#95b7d9" stroke="#26292d" stroke-width="1.9"/>
<circle cx="1149.8" cy="438.2" r="8.1" fill="#95b7d9" stroke="#26292d" stroke-width="1.9"/>
<text x="1149.8" y="441.3" font-family="Liberation Sans" font-size="8.6" font-weight="bold" fill="#3a3a3a" stroke="#fff" stroke-width="2.4" stroke-linejoin="round" paint-order="stroke" text-anchor="middle">3</text>
<circle cx="1065" cy="457.2" r="8.1" fill="#36c936" stroke="#2a2a2a" stroke-width="1.9"/>
<text x="1065" y="460.3" font-family="Liberation Sans" font-size="8.6" font-weight="bold" fill="#3a3a3a" stroke="#fff" stroke-width="2.4" stroke-linejoin="round" paint-order="stroke" text-anchor="middle">3</text>
<circle cx="1077.8" cy="461.2" r="8.1" fill="#95b7d9" stroke="#26292d" stroke-width="1.9"/>
<text x="1077.8" y="464.3" font-family="Liberation Sans" font-size="8.6" font-weight="bold" fill="#3a3a3a" stroke="#fff" stroke-width="2.4" stroke-linejoin="round" paint-order="stroke" text-anchor="middle">3</text>
<circle cx="1132.8" cy="464.6" r="8.1" fill="#95b7d9" stroke="#26292d" stroke-width="1.9"/>
<text x="1132.8" y="467.7" font-family="Liberation Sans" font-size="8.6" font-weight="bold" fill="#3a3a3a" stroke="#fff" stroke-width="2.4" stroke-linejoin="round" paint-order="stroke" text-anchor="middle">3</text>
<circle cx="1157" cy="458.4" r="8.1" fill="#95b7d9" stroke="#26292d" stroke-width="1.9"/>
<text x="1157" y="461.5" font-family="Liberation Sans" font-size="8.6" font-weight="bold" fill="#3a3a3a" stroke="#fff" stroke-width="2.4" stroke-linejoin="round" paint-order="stroke" text-anchor="middle">3</text>
<circle cx="1149.8" cy="479.7" r="8.1" fill="#95b7d9" stroke="#26292d" stroke-width="1.9"/>
<circle cx="1109" cy="485.7" r="8.1" fill="#95b7d9" stroke="#26292d" stroke-width="1.9"/>
<text x="1109" y="488.8" font-family="Liberation Sans" font-size="8.6" font-weight="bold" fill="#3a3a3a" stroke="#fff" stroke-width="2.4" stroke-linejoin="round" paint-order="stroke" text-anchor="middle">4</text>
<circle cx="1138" cy="491.2" r="8.1" fill="#95b7d9" stroke="#26292d" stroke-width="1.9"/>
<text x="1138" y="494.3" font-family="Liberation Sans" font-size="8.6" font-weight="bold" fill="#3a3a3a" stroke="#fff" stroke-width="2.4" stroke-linejoin="round" paint-order="stroke" text-anchor="middle">3</text>
<circle cx="1064" cy="497.8" r="8.1" fill="#95b7d9" stroke="#26292d" stroke-width="1.9"/>
<text x="1064" y="500.9" font-family="Liberation Sans" font-size="8.6" font-weight="bold" fill="#3a3a3a" stroke="#fff" stroke-width="2.4" stroke-linejoin="round" paint-order="stroke" text-anchor="middle">3</text>
<circle cx="1100.8" cy="502.7" r="8.1" fill="#4cc46a" stroke="#2a2a2a" stroke-width="1.9"/>
<text x="1100.8" y="505.8" font-family="Liberation Sans" font-size="8.6" font-weight="bold" fill="#3a3a3a" stroke="#fff" stroke-width="2.4" stroke-linejoin="round" paint-order="stroke" text-anchor="middle">2</text>
<circle cx="1119.8" cy="499.9" r="8.1" fill="#95b7d9" stroke="#26292d" stroke-width="1.9"/>
<text x="1119.8" y="503.0" font-family="Liberation Sans" font-size="8.6" font-weight="bold" fill="#3a3a3a" stroke="#fff" stroke-width="2.4" stroke-linejoin="round" paint-order="stroke" text-anchor="middle">2</text>
<circle cx="1136.3" cy="506.5" r="8.1" fill="#95b7d9" stroke="#26292d" stroke-width="1.9"/>
<circle cx="1084.7" cy="512.5" r="8.1" fill="#95b7d9" stroke="#26292d" stroke-width="1.9"/>
<text x="1084.7" y="515.6" font-family="Liberation Sans" font-size="8.6" font-weight="bold" fill="#3a3a3a" stroke="#fff" stroke-width="2.4" stroke-linejoin="round" paint-order="stroke" text-anchor="middle">2</text>
<circle cx="1064" cy="520.3" r="8.1" fill="#95b7d9" stroke="#26292d" stroke-width="1.9"/>
<text x="1064" y="523.4" font-family="Liberation Sans" font-size="8.6" font-weight="bold" fill="#3a3a3a" stroke="#fff" stroke-width="2.4" stroke-linejoin="round" paint-order="stroke" text-anchor="middle">2</text>
<circle cx="1124.2" cy="525.8" r="8.1" fill="#95b7d9" stroke="#26292d" stroke-width="1.9"/>
<circle cx="1186.5" cy="351.3" r="8.1" fill="#95b7d9" stroke="#26292d" stroke-width="1.9"/>
<text x="1186.5" y="354.4" font-family="Liberation Sans" font-size="8.6" font-weight="bold" fill="#3a3a3a" stroke="#fff" stroke-width="2.4" stroke-linejoin="round" paint-order="stroke" text-anchor="middle">4</text>
<circle cx="1208.1" cy="349.4" r="8.1" fill="#95b7d9" stroke="#26292d" stroke-width="1.9"/>
<text x="1208.1" y="352.5" font-family="Liberation Sans" font-size="8.6" font-weight="bold" fill="#3a3a3a" stroke="#fff" stroke-width="2.4" stroke-linejoin="round" paint-order="stroke" text-anchor="middle">2</text>
<circle cx="1182.2" cy="382.6" r="8.1" fill="#95b7d9" stroke="#26292d" stroke-width="1.9"/>
<text x="1182.2" y="385.7" font-family="Liberation Sans" font-size="8.6" font-weight="bold" fill="#3a3a3a" stroke="#fff" stroke-width="2.4" stroke-linejoin="round" paint-order="stroke" text-anchor="middle">2</text>
<circle cx="1198.8" cy="382.6" r="8.1" fill="#95b7d9" stroke="#26292d" stroke-width="1.9"/>
<circle cx="1220.8" cy="380.4" r="8.1" fill="#95b7d9" stroke="#26292d" stroke-width="1.9"/>
<text x="1220.8" y="383.5" font-family="Liberation Sans" font-size="8.6" font-weight="bold" fill="#3a3a3a" stroke="#fff" stroke-width="2.4" stroke-linejoin="round" paint-order="stroke" text-anchor="middle">3</text>
<circle cx="1230.9" cy="369.2" r="9.4" fill="#95b7d9" stroke="#26292d" stroke-width="1.9"/>
<text x="1230.9" y="372.3" font-family="Liberation Sans" font-size="8.6" font-weight="bold" fill="#3a3a3a" stroke="#fff" stroke-width="2.4" stroke-linejoin="round" paint-order="stroke" text-anchor="middle">6</text>
<circle cx="1264" cy="379.7" r="8.1" fill="#95b7d9" stroke="#26292d" stroke-width="1.9"/>
<text x="1264" y="382.8" font-family="Liberation Sans" font-size="8.6" font-weight="bold" fill="#3a3a3a" stroke="#fff" stroke-width="2.4" stroke-linejoin="round" paint-order="stroke" text-anchor="middle">2</text>
<circle cx="1208.4" cy="397.7" r="8.1" fill="#95b7d9" stroke="#26292d" stroke-width="1.9"/>
<circle cx="1231.2" cy="400.6" r="8.1" fill="#79c0b2" stroke="#2f3338" stroke-width="1.9"/>
<text x="1231.2" y="403.7" font-family="Liberation Sans" font-size="8.6" font-weight="bold" fill="#3a3a3a" stroke="#fff" stroke-width="2.4" stroke-linejoin="round" paint-order="stroke" text-anchor="middle">2</text>
<circle cx="1252.5" cy="396.3" r="9.4" fill="#95b7d9" stroke="#26292d" stroke-width="1.9"/>
<text x="1252.5" y="399.4" font-family="Liberation Sans" font-size="8.6" font-weight="bold" fill="#3a3a3a" stroke="#fff" stroke-width="2.4" stroke-linejoin="round" paint-order="stroke" text-anchor="middle">6</text>
<circle cx="1272.7" cy="403.5" r="8.1" fill="#95b7d9" stroke="#26292d" stroke-width="1.9"/>
<text x="1272.7" y="406.6" font-family="Liberation Sans" font-size="8.6" font-weight="bold" fill="#3a3a3a" stroke="#fff" stroke-width="2.4" stroke-linejoin="round" paint-order="stroke" text-anchor="middle">3</text>
<circle cx="1197.3" cy="408.9" r="8.1" fill="#95b7d9" stroke="#26292d" stroke-width="1.9"/>
<text x="1197.3" y="412.0" font-family="Liberation Sans" font-size="8.6" font-weight="bold" fill="#3a3a3a" stroke="#fff" stroke-width="2.4" stroke-linejoin="round" paint-order="stroke" text-anchor="middle">3</text>
<circle cx="1175.4" cy="431.2" r="8.1" fill="#95b7d9" stroke="#26292d" stroke-width="1.9"/>
<text x="1175.4" y="434.3" font-family="Liberation Sans" font-size="8.6" font-weight="bold" fill="#3a3a3a" stroke="#fff" stroke-width="2.4" stroke-linejoin="round" paint-order="stroke" text-anchor="middle">4</text>
<circle cx="1192.7" cy="434.7" r="8.1" fill="#95b7d9" stroke="#26292d" stroke-width="1.9"/>
<text x="1192.7" y="437.8" font-family="Liberation Sans" font-size="8.6" font-weight="bold" fill="#3a3a3a" stroke="#fff" stroke-width="2.4" stroke-linejoin="round" paint-order="stroke" text-anchor="middle">5</text>
<circle cx="1213.7" cy="428.3" r="8.1" fill="#95b7d9" stroke="#26292d" stroke-width="1.9"/>
<text x="1213.7" y="431.4" font-family="Liberation Sans" font-size="8.6" font-weight="bold" fill="#3a3a3a" stroke="#fff" stroke-width="2.4" stroke-linejoin="round" paint-order="stroke" text-anchor="middle">5</text>
<circle cx="1235.9" cy="424.3" r="8.1" fill="#95b7d9" stroke="#26292d" stroke-width="1.9"/>
<text x="1235.9" y="427.4" font-family="Liberation Sans" font-size="8.6" font-weight="bold" fill="#3a3a3a" stroke="#fff" stroke-width="2.4" stroke-linejoin="round" paint-order="stroke" text-anchor="middle">4</text>
<circle cx="1256.3" cy="431.8" r="9.4" fill="#95b7d9" stroke="#26292d" stroke-width="1.9"/>
<text x="1256.3" y="434.9" font-family="Liberation Sans" font-size="8.6" font-weight="bold" fill="#3a3a3a" stroke="#fff" stroke-width="2.4" stroke-linejoin="round" paint-order="stroke" text-anchor="middle">7</text>
<circle cx="1277" cy="427.8" r="8.1" fill="#95b7d9" stroke="#26292d" stroke-width="1.9"/>
<circle cx="1278.2" cy="444.2" r="8.1" fill="#95b7d9" stroke="#26292d" stroke-width="1.9"/>
<circle cx="1206.8" cy="449.4" r="8.1" fill="#4cc46a" stroke="#2a2a2a" stroke-width="1.9"/>
<text x="1206.8" y="452.5" font-family="Liberation Sans" font-size="8.6" font-weight="bold" fill="#3a3a3a" stroke="#fff" stroke-width="2.4" stroke-linejoin="round" paint-order="stroke" text-anchor="middle">2</text>
<circle cx="1183.7" cy="459.8" r="8.1" fill="#95b7d9" stroke="#26292d" stroke-width="1.9"/>
<text x="1183.7" y="462.9" font-family="Liberation Sans" font-size="8.6" font-weight="bold" fill="#3a3a3a" stroke="#fff" stroke-width="2.4" stroke-linejoin="round" paint-order="stroke" text-anchor="middle">5</text>
<circle cx="1245.9" cy="460.1" r="8.1" fill="#95b7d9" stroke="#26292d" stroke-width="1.9"/>
<text x="1245.9" y="463.2" font-family="Liberation Sans" font-size="8.6" font-weight="bold" fill="#3a3a3a" stroke="#fff" stroke-width="2.4" stroke-linejoin="round" paint-order="stroke" text-anchor="middle">3</text>
<circle cx="1266.6" cy="462.4" r="8.1" fill="#95b7d9" stroke="#26292d" stroke-width="1.9"/>
<text x="1266.6" y="465.5" font-family="Liberation Sans" font-size="8.6" font-weight="bold" fill="#3a3a3a" stroke="#fff" stroke-width="2.4" stroke-linejoin="round" paint-order="stroke" text-anchor="middle">2</text>
<circle cx="1213.4" cy="477.9" r="8.1" fill="#95b7d9" stroke="#26292d" stroke-width="1.9"/>
<text x="1213.4" y="481.0" font-family="Liberation Sans" font-size="8.6" font-weight="bold" fill="#3a3a3a" stroke="#fff" stroke-width="2.4" stroke-linejoin="round" paint-order="stroke" text-anchor="middle">5</text>
<circle cx="1205.1" cy="489.5" r="8.1" fill="#95b7d9" stroke="#26292d" stroke-width="1.9"/>
<circle cx="1225.8" cy="487.4" r="8.1" fill="#95b7d9" stroke="#26292d" stroke-width="1.9"/>
<text x="1225.8" y="490.5" font-family="Liberation Sans" font-size="8.6" font-weight="bold" fill="#3a3a3a" stroke="#fff" stroke-width="2.4" stroke-linejoin="round" paint-order="stroke" text-anchor="middle">3</text>
<circle cx="1254.9" cy="485.7" r="8.9" fill="#95b7d9" stroke="#26292d" stroke-width="1.9"/>
<text x="1254.9" y="488.8" font-family="Liberation Sans" font-size="8.6" font-weight="bold" fill="#3a3a3a" stroke="#fff" stroke-width="2.4" stroke-linejoin="round" paint-order="stroke" text-anchor="middle">5</text>
<circle cx="1268.7" cy="484.3" r="8.1" fill="#95b7d9" stroke="#26292d" stroke-width="1.9"/>
<text x="1268.7" y="487.4" font-family="Liberation Sans" font-size="8.6" font-weight="bold" fill="#3a3a3a" stroke="#fff" stroke-width="2.4" stroke-linejoin="round" paint-order="stroke" text-anchor="middle">2</text>
<circle cx="1169.3" cy="485.7" r="10.4" fill="#95b7d9" stroke="#26292d" stroke-width="1.9"/>
<text x="1169.3" y="488.8" font-family="Liberation Sans" font-size="8.6" font-weight="bold" fill="#3a3a3a" stroke="#fff" stroke-width="2.4" stroke-linejoin="round" paint-order="stroke" text-anchor="middle">5</text>
<circle cx="1169.8" cy="503" r="8.1" fill="#95b7d9" stroke="#26292d" stroke-width="1.9"/>
<circle cx="1191.3" cy="517.7" r="8.1" fill="#95b7d9" stroke="#26292d" stroke-width="1.9"/>
<text x="1191.3" y="520.8" font-family="Liberation Sans" font-size="8.6" font-weight="bold" fill="#3a3a3a" stroke="#fff" stroke-width="2.4" stroke-linejoin="round" paint-order="stroke" text-anchor="middle">2</text>
<circle cx="1171" cy="524.6" r="8.1" fill="#95b7d9" stroke="#26292d" stroke-width="1.9"/>
<circle cx="1239.7" cy="522" r="8.1" fill="#95b7d9" stroke="#26292d" stroke-width="1.9"/>
<text x="1239.7" y="525.1" font-family="Liberation Sans" font-size="8.6" font-weight="bold" fill="#3a3a3a" stroke="#fff" stroke-width="2.4" stroke-linejoin="round" paint-order="stroke" text-anchor="middle">2</text>
<circle cx="1258.7" cy="516" r="8.1" fill="#95b7d9" stroke="#26292d" stroke-width="1.9"/>
<text x="1258.7" y="519.1" font-family="Liberation Sans" font-size="8.6" font-weight="bold" fill="#3a3a3a" stroke="#fff" stroke-width="2.4" stroke-linejoin="round" paint-order="stroke" text-anchor="middle">4</text>
<circle cx="1278.7" cy="512.5" r="8.1" fill="#95b7d9" stroke="#26292d" stroke-width="1.9"/>
<rect x="857.8" y="227.5" width="21" height="37" rx="4" fill="#fff" fill-opacity="0.55"/>
<rect x="857.8" y="267.8" width="21" height="20" rx="4" fill="#fff" fill-opacity="0.55"/>
<rect x="860.6" y="229.9" width="15.2" height="14.6" rx="1.5" fill="#5a83ba"/>
<rect x="860.6" y="247.2" width="15.2" height="14.6" rx="1.5" fill="#5a83ba"/>
<rect x="860.6" y="270.3" width="15.2" height="15.1" rx="1.5" fill="#5a83ba"/>
<path d="M864.9 237.4 H871.5 M868.2 234.1 V240.7" stroke="#fff" stroke-width="1.8"/>
<path d="M865 254.4 H871.4" stroke="#fff" stroke-width="1.8"/>
<path d="M865.2 274.4 L871 277.9 L865.2 281.4" stroke="#fff" stroke-width="1.9" fill="none"/>
<rect x="1365.2" y="626.3" width="14.5" height="14.7" rx="1" fill="#5a83ba" fill-opacity="0.9"/>
<path d="M1372.4 629.5 V630.6 M1372.4 632.6 V638.2" stroke="#fff" stroke-width="1.8"/>
</svg>
</body></html>
